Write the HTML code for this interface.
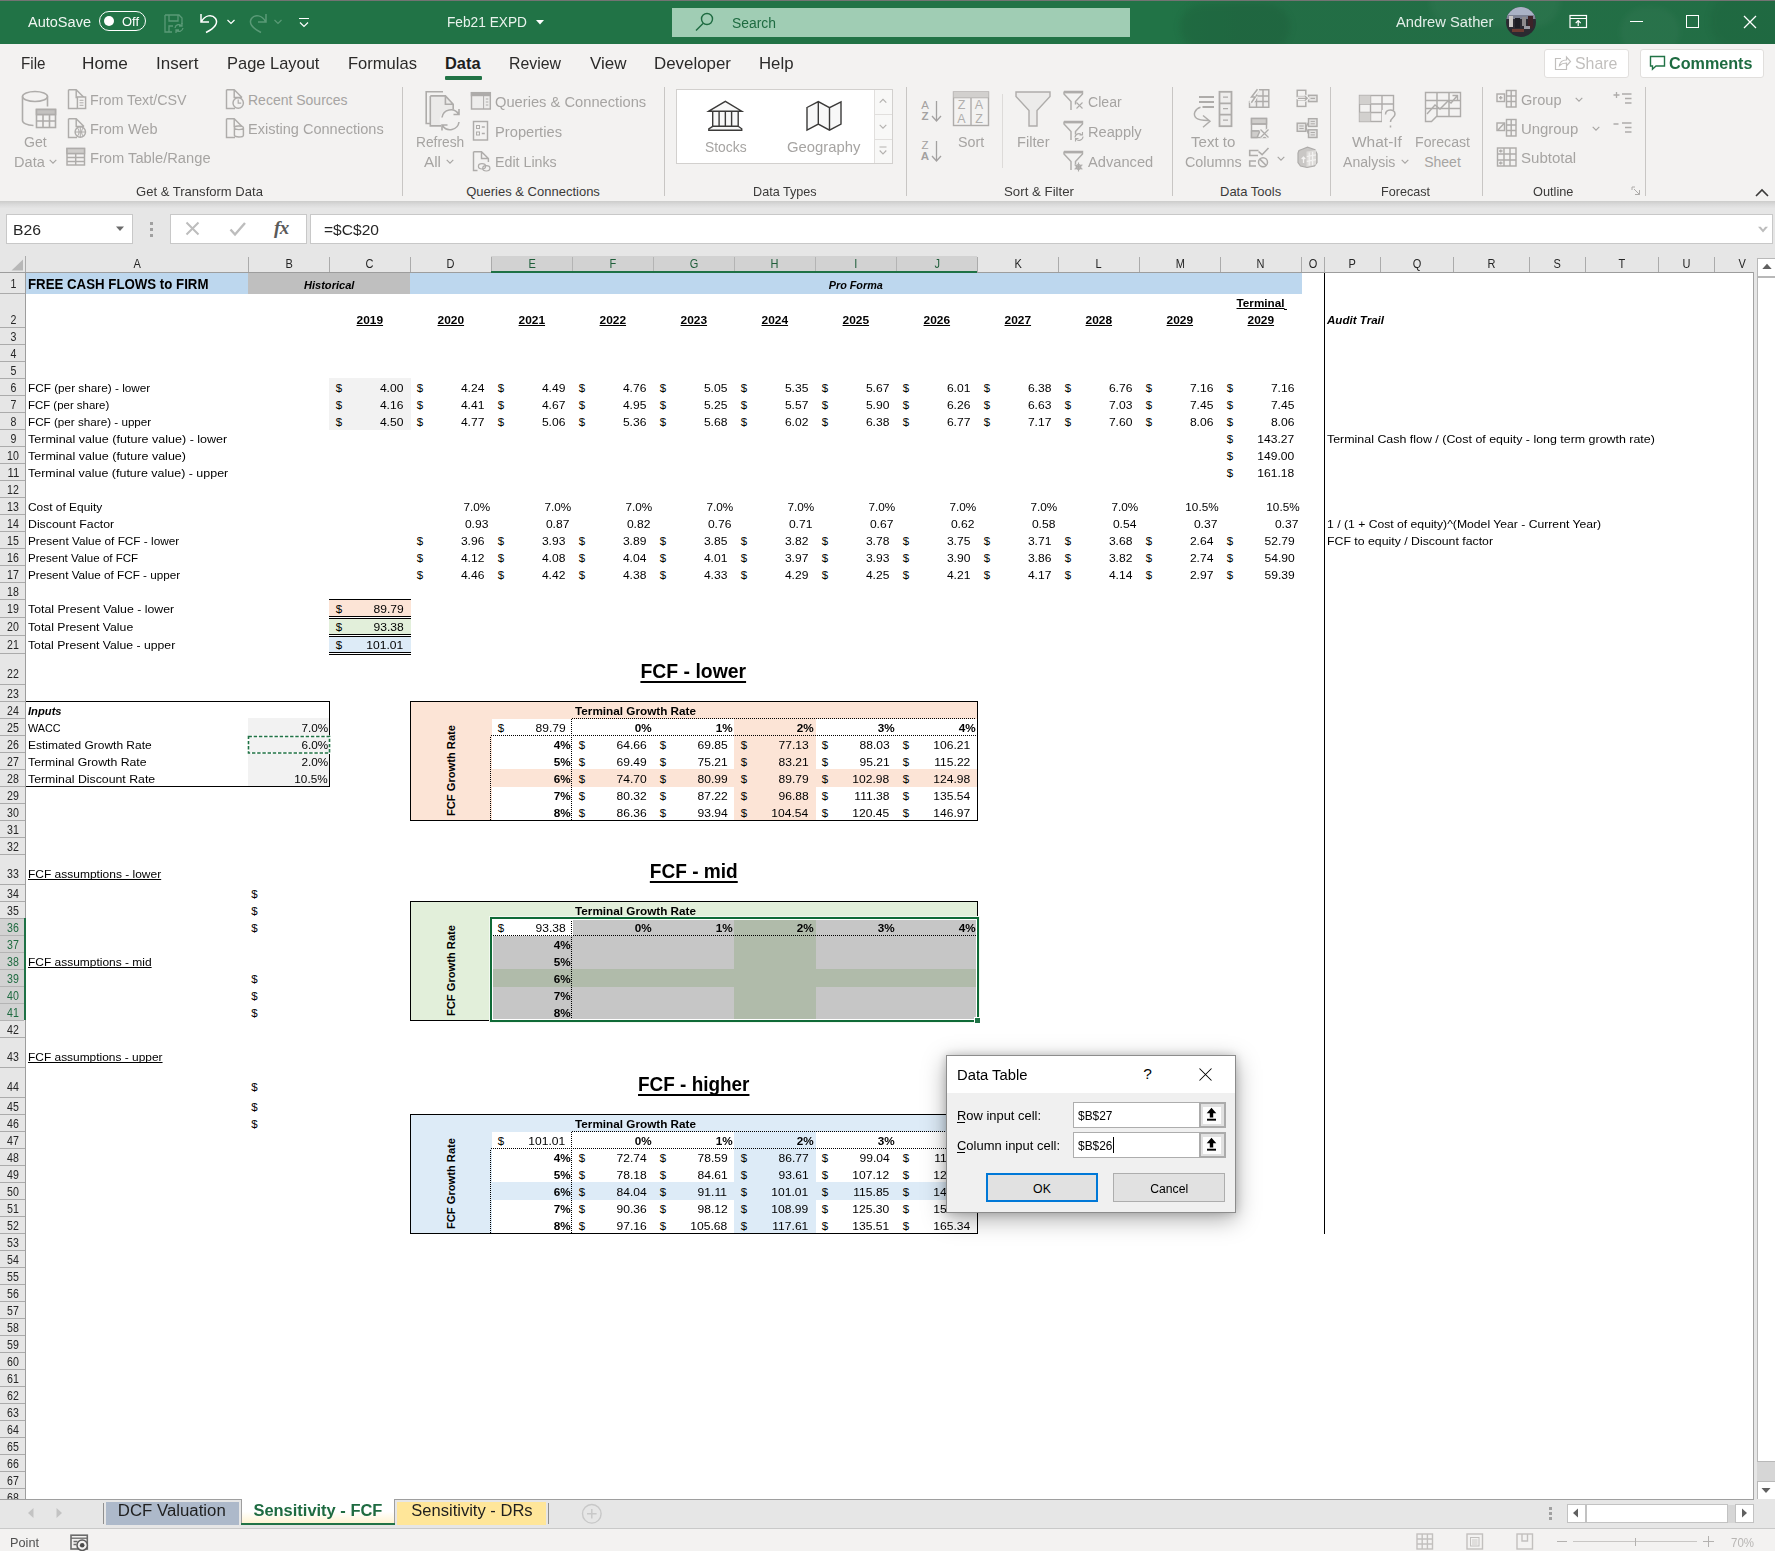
<!DOCTYPE html>
<html lang="en"><head><meta charset="utf-8"><title>Feb21 EXPD - Excel</title>
<style>
html,body{margin:0;padding:0}
body{width:1775px;height:1551px;position:relative;overflow:hidden;background:#fff;font-family:"Liberation Sans",sans-serif}
.a{position:absolute}
.t{position:absolute;white-space:nowrap;text-decoration-skip-ink:none}
.c{position:absolute;white-space:nowrap;font-size:11.500px;line-height:15px;height:15px}
.v{position:absolute;white-space:nowrap;font-weight:bold;font-size:11.500px;line-height:15px;height:15px;width:110px;text-align:center;transform:rotate(-90deg);transform-origin:center center}
svg{overflow:visible}
</style></head>
<body>
<div class="a" style="left:0px;top:0px;width:1775px;height:44px;background:#217346;"></div>
<div class="a" style="left:0px;top:0px;width:1775px;height:1px;background:#737373;"></div>
<div class="a" style="left:1150px;top:1px;width:625px;height:43px;overflow:hidden"><div class="a" style="left:20px;top:0;width:605px;height:43px;background:linear-gradient(90deg,rgba(40,90,66,0),rgba(40,90,66,.22) 12%,rgba(40,90,66,.20) 100%)"></div><div class="a" style="left:30px;top:3px;width:110px;height:46px;border-radius:23px;background:rgba(20,70,45,.18);filter:blur(3px)"></div><div class="a" style="left:280px;top:-24px;width:130px;height:50px;border-radius:25px;background:rgba(255,255,255,.035);filter:blur(3px)"></div><div class="a" style="left:470px;top:6px;width:60px;height:50px;border-radius:25px;background:rgba(255,255,255,.03);filter:blur(3px)"></div><div class="a" style="left:560px;top:-10px;width:90px;height:60px;border-radius:30px;background:rgba(20,70,45,.12);filter:blur(3px)"></div></div>
<div class="t" style="top:12.0px;font-size:15.2px;line-height:20px;height:20px;color:#f0f6f2;left:28.0px;transform:scaleX(0.956);transform-origin:left center;">AutoSave</div>
<div class="a" style="left:99px;top:11px;width:45px;height:18px;border:1.5px solid #fff;border-radius:11px"></div>
<div class="a" style="left:104px;top:16px;width:10px;height:10px;border-radius:5px;background:#fff"></div>
<div class="t" style="top:14.0px;font-size:12.5px;line-height:16px;height:16px;color:#fff;left:122.0px;transform:scaleX(1.034);transform-origin:left center;">Off</div>
<svg class="a" style="left:162px;top:11px;" width="24" height="24" viewBox="0 0 24 24" fill="none"><path d="M3 4h14l3 3v6M3 4v17h7M7 4v6h9V4M7 21v-6h4" stroke="#5a9a77" stroke-width="1.3"/><path d="M13 17a4 4 0 0 1 7-2m1 2a4 4 0 0 1-7 2M20 12v3h-3M14 22v-3h3" stroke="#5a9a77" stroke-width="1.3"/></svg>
<svg class="a" style="left:197px;top:10px;" width="24" height="26" viewBox="0 0 24 26" fill="none"><path d="M4 4v8h8M4.5 11.5C8 5 15 4 18.5 8.5c3 4.5-.5 9.500-9.500 14" stroke="#fff" stroke-width="1.5"/></svg>
<svg class="a" style="left:226px;top:18px;" width="10" height="8" viewBox="0 0 10 8" fill="none"><path d="M1.500 2l3.500 3.500L8.500 2" stroke="#fff" stroke-width="1.2"/></svg>
<svg class="a" style="left:246px;top:10px;" width="24" height="26" viewBox="0 0 24 26" fill="none"><path d="M20 4v8h-8M19.500 11.500C16 5 9 4 5.500 8.500c-3 4.500.500 9.500 9.500 14" stroke="#5a9a77" stroke-width="1.500"/></svg>
<svg class="a" style="left:273px;top:18px;" width="10" height="8" viewBox="0 0 10 8" fill="none"><path d="M1.500 2l3.500 3.500L8.500 2" stroke="#5a9a77" stroke-width="1.2"/></svg>
<svg class="a" style="left:298px;top:16px;" width="12" height="12" viewBox="0 0 12 12" fill="none"><path d="M1 2.500h10M2 6.500l4 4 4-4" stroke="#fff" stroke-width="1.200"/></svg>
<div class="t" style="top:12.0px;font-size:15.2px;line-height:20px;height:20px;color:#eaf3ee;left:447.0px;transform:scaleX(0.902);transform-origin:left center;">Feb21 EXPD</div>
<svg class="a" style="left:535px;top:19px;" width="10" height="7" viewBox="0 0 10 7" fill="none"><path d="M1 1h8L5 5.500z" fill="#fff"/></svg>
<div class="a" style="left:672px;top:8px;width:458px;height:29px;background:#a0cdb4;"></div>
<svg class="a" style="left:694px;top:11px;" width="22" height="22" viewBox="0 0 22 22" fill="none"><circle cx="13" cy="8" r="5.500" stroke="#1e6b41" stroke-width="1.400"/><path d="M9 12.500L2 19.500" stroke="#1e6b41" stroke-width="1.500"/></svg>
<div class="t" style="top:12.5px;font-size:15.2px;line-height:20px;height:20px;color:#1e6b41;left:732.0px;transform:scaleX(0.914);transform-origin:left center;">Search</div>
<div class="t" style="top:12.3px;font-size:15.2px;line-height:20px;height:20px;color:#e3eee8;left:1396.0px;transform:scaleX(0.970);transform-origin:left center;">Andrew Sather</div>
<div class="a" style="left:1506px;top:7px;width:30px;height:30px;border-radius:15px;overflow:hidden;background:#2b2a31"><div class="a" style="left:0;top:0;width:30px;height:10px;background:#aab2c6"></div><div class="a" style="left:0;top:8px;width:30px;height:4px;background:#7d8294"></div><div class="a" style="left:3px;top:9px;width:4px;height:11px;background:#c9c6c4"></div><div class="a" style="left:9px;top:11px;width:5px;height:10px;background:#1d1d24"></div><div class="a" style="left:16px;top:10px;width:4px;height:9px;background:#8d8a8c"></div><div class="a" style="left:22px;top:9px;width:5px;height:12px;background:#3d2328"></div><div class="a" style="left:6px;top:22px;width:12px;height:3px;background:#6d3b32"></div><div class="a" style="left:18px;top:19px;width:6px;height:3px;background:#9a9aa2"></div></div>
<svg class="a" style="left:1569px;top:14px;" width="20" height="16" viewBox="0 0 20 16" fill="none"><rect x="1" y="1.500" width="16.500" height="12" stroke="#fff" stroke-width="1.200"/><path d="M1 4.500h16.500M9.200 12V7M6.700 9.200l2.500-2.500 2.500 2.500" stroke="#fff" stroke-width="1.200"/></svg>
<div class="a" style="left:1630px;top:21px;width:13px;height:1.3px;background:#fff;"></div>
<div class="a" style="left:1686px;top:15px;width:11px;height:11px;border:1.300px solid #fff"></div>
<svg class="a" style="left:1743px;top:15px;" width="14" height="14" viewBox="0 0 14 14" fill="none"><path d="M1 1l12 12M13 1L1 13" stroke="#fff" stroke-width="1.300"/></svg>
<div class="a" style="left:0px;top:44px;width:1775px;height:157px;background:#f3f2f1;"></div>
<div class="t" style="top:52.5px;font-size:16.4px;line-height:21px;height:21px;color:#2b2a29;left:21.0px;transform:scaleX(0.927);transform-origin:left center;">File</div>
<div class="t" style="top:52.5px;font-size:16.4px;line-height:21px;height:21px;color:#2b2a29;left:82.0px;transform:scaleX(1.051);transform-origin:left center;">Home</div>
<div class="t" style="top:52.5px;font-size:16.4px;line-height:21px;height:21px;color:#2b2a29;left:156.0px;transform:scaleX(1.036);transform-origin:left center;">Insert</div>
<div class="t" style="top:52.5px;font-size:16.4px;line-height:21px;height:21px;color:#2b2a29;left:227.0px;transform:scaleX(1.004);transform-origin:left center;">Page Layout</div>
<div class="t" style="top:52.5px;font-size:16.4px;line-height:21px;height:21px;color:#2b2a29;left:348.0px;transform:scaleX(1.010);transform-origin:left center;">Formulas</div>
<div class="t" style="top:52.5px;font-size:16.4px;line-height:21px;height:21px;color:#2b2a29;left:509.0px;transform:scaleX(0.967);transform-origin:left center;">Review</div>
<div class="t" style="top:52.5px;font-size:16.4px;line-height:21px;height:21px;color:#2b2a29;left:590.0px;transform:scaleX(1.035);transform-origin:left center;">View</div>
<div class="t" style="top:52.5px;font-size:16.4px;line-height:21px;height:21px;color:#2b2a29;left:654.0px;transform:scaleX(1.030);transform-origin:left center;">Developer</div>
<div class="t" style="top:52.5px;font-size:16.4px;line-height:21px;height:21px;color:#2b2a29;left:759.0px;transform:scaleX(1.023);transform-origin:left center;">Help</div>
<div class="t" style="top:52.5px;font-size:16.4px;line-height:21px;height:21px;color:#1e1e1e;font-weight:bold;left:445.0px;">Data</div>
<div class="a" style="left:445px;top:76px;width:37px;height:4px;background:#217346;border-radius:1px;"></div>
<div class="a" style="left:1544px;top:49px;width:83px;height:27px;border:1px solid #e1dfdd;border-radius:3px;background:#fff"></div>
<svg class="a" style="left:1553px;top:54px;" width="20" height="18" viewBox="0 0 20 18" fill="none"><path d="M8 4.500H2.500v11h11V12M6.500 11.500c.5-4 3-5.500 7-5.500V3l4 4.500-4 4.500V9c-3 0-5 .5-7 2.500z" stroke="#c1bfbd" stroke-width="1.200"/></svg>
<div class="t" style="top:52.5px;font-size:16.4px;line-height:21px;height:21px;color:#c1bfbd;left:1574.5px;transform:scaleX(0.971);transform-origin:left center;">Share</div>
<div class="a" style="left:1640px;top:49px;width:122px;height:27px;border:1px solid #e1dfdd;border-radius:3px;background:#fff"></div>
<svg class="a" style="left:1649px;top:55px;" width="18" height="17" viewBox="0 0 18 17" fill="none"><path d="M1.500 1.500h14v9.500H7l-3.500 3.200V11h-2z" stroke="#217346" stroke-width="1.400"/></svg>
<div class="t" style="top:52.5px;font-size:16.4px;line-height:21px;height:21px;color:#1e6b41;font-weight:bold;left:1669.0px;transform:scaleX(0.985);transform-origin:left center;">Comments</div>
<svg class="a" style="left:20px;top:90px;" width="38" height="40" viewBox="0 0 38 40" fill="none"><g stroke="#aeacaa" stroke-width="1.6" stroke-linejoin="miter"><ellipse cx="15" cy="6.500" rx="12.500" ry="5"/><path d="M2.500 6.500v24c0 2.600 4.500 4.700 11 5M27.500 6.500v10"/><rect x="16.500" y="19.500" width="19" height="18" fill="#f3f2f1"/><path d="M16.500 24.500h19M16.500 31h19M23 24.500v13M29.500 24.500v13" /><rect x="16.500" y="19.500" width="19" height="5" fill="#c4c2c0"/></g></svg>
<div class="t" style="top:132.7px;font-size:14.0px;line-height:18px;height:18px;color:#a6a4a2;left:24.0px;transform:scaleX(1.006);transform-origin:left center;">Get</div>
<div class="t" style="top:152.7px;font-size:14.0px;line-height:18px;height:18px;color:#a6a4a2;left:13.7px;transform:scaleX(1.041);transform-origin:left center;">Data</div>
<svg class="a" style="left:49px;top:159.0px;" width="8" height="6" viewBox="0 0 8 6" fill="none"><path d="M0.700 0.800l3.300 3.400 3.300-3.400" stroke="#a6a4a2" stroke-width="1.100"/></svg>
<svg class="a" style="left:67px;top:89px;" width="20" height="21" viewBox="0 0 20 21" fill="none"><g stroke="#aeacaa" stroke-width="1.45" stroke-linejoin="miter"><path d="M1.500 0.700H9.200L17 8.500M9.200 0.700V8.500H17M1.500 0.700V19.500H10"/><rect x="10.400" y="8" width="8.200" height="11.500" fill="#f3f2f1"/><path d="M12.500 11.300h4M12.500 13.800h4M12.500 16.300h4" stroke-width="1"/></g></svg>
<div class="t" style="top:90.5px;font-size:14.0px;line-height:18px;height:18px;color:#a6a4a2;left:90.0px;transform:scaleX(1.020);transform-origin:left center;">From Text/CSV</div>
<svg class="a" style="left:67px;top:118px;" width="20" height="21" viewBox="0 0 20 21" fill="none"><g stroke="#aeacaa" stroke-width="1.45" stroke-linejoin="miter"><path d="M1.500 0.700H9.200L17 8.500M9.200 0.700V8.500H17M1.500 0.700V19.500H10"/><circle cx="13.300" cy="14" r="5.200" fill="#f3f2f1"/><path d="M8.100 14h10.400M13.300 8.800v10.400M10.500 10c2 2.500 2 5.500 0 8M16.100 10c-2 2.500-2 5.500 0 8" stroke-width="1"/></g></svg>
<div class="t" style="top:119.5px;font-size:14.0px;line-height:18px;height:18px;color:#a6a4a2;left:90.0px;transform:scaleX(1.037);transform-origin:left center;">From Web</div>
<svg class="a" style="left:66px;top:147px;" width="20" height="20" viewBox="0 0 20 20" fill="none"><g stroke="#aeacaa" stroke-width="1.45" stroke-linejoin="miter"><rect x="1" y="1.500" width="17.500" height="16.500"/><path d="M1 6.500h17.500M1 10.500h17.500M1 14.500h17.500M9.700 6.500v11.500"/><rect x="1" y="1.500" width="17.500" height="5" fill="#cfcdcb"/></g></svg>
<div class="t" style="top:148.5px;font-size:14.0px;line-height:18px;height:18px;color:#a6a4a2;left:90.0px;transform:scaleX(1.049);transform-origin:left center;">From Table/Range</div>
<svg class="a" style="left:225px;top:89px;" width="20" height="21" viewBox="0 0 20 21" fill="none"><g stroke="#aeacaa" stroke-width="1.45" stroke-linejoin="miter"><path d="M1.500 0.700H9.200L17 8.500M9.200 0.700V8.500H17M1.500 0.700V19.500H10"/><circle cx="13.200" cy="14" r="5.200" fill="#f3f2f1"/><path d="M13.200 10.500v3.700h3" stroke-width="1.200"/></g></svg>
<div class="t" style="top:90.5px;font-size:14.0px;line-height:18px;height:18px;color:#a6a4a2;left:248.0px;">Recent Sources</div>
<svg class="a" style="left:225px;top:118px;" width="20" height="21" viewBox="0 0 20 21" fill="none"><g stroke="#aeacaa" stroke-width="1.45" stroke-linejoin="miter"><path d="M1.500 0.700H9.200L17 8.500M9.200 0.700V8.500H17M1.500 0.700V19.500H10"/><path d="M9.400 9.800c0-2.400 9-2.400 9 0v7.400c0 2.400-9 2.400-9 0zM9.400 9.800c0 2.400 9 2.400 9 0" fill="#f3f2f1"/></g></svg>
<div class="t" style="top:119.5px;font-size:14.0px;line-height:18px;height:18px;color:#a6a4a2;left:248.0px;transform:scaleX(1.038);transform-origin:left center;">Existing Connections</div>
<div class="t" style="top:183.0px;font-size:13.0px;line-height:17px;height:17px;color:#3b3a39;left:136.2px;transform:scaleX(1.004);transform-origin:left center;">Get &amp; Transform Data</div>
<div class="a" style="left:402px;top:87px;width:1px;height:109px;background:#c8c6c4;"></div>
<svg class="a" style="left:424px;top:90px;" width="38" height="40" viewBox="0 0 38 40" fill="none"><g stroke="#aeacaa" stroke-width="1.6" stroke-linejoin="miter"><path d="M19 1.700H2.200V33.500H6"/><path d="M6.300 5.900H21.400L29.200 14.300V35.900H6.300z" fill="#ebeae9" stroke="none"/><path d="M6.300 5.900H21.400L29.200 14.300V20M6.300 5.900V35.900H17M21.400 5.900V14.300H29.200"/><circle cx="26.500" cy="29.800" r="10.800" fill="#f3f2f1" stroke="none"/><path d="M18 27.500a9 9 0 0 1 16.500-3.500M35 32a9 9 0 0 1-16.500 3.500M35 19v5.500h-5.500M18 40.500v-5.500h5.500"/></g></svg>
<div class="t" style="top:132.7px;font-size:14.0px;line-height:18px;height:18px;color:#a6a4a2;left:415.5px;transform:scaleX(0.983);transform-origin:left center;">Refresh</div>
<div class="t" style="top:152.5px;font-size:14.0px;line-height:18px;height:18px;color:#a6a4a2;left:424.2px;transform:scaleX(1.093);transform-origin:left center;">All</div>
<svg class="a" style="left:446px;top:159.0px;" width="8" height="6" viewBox="0 0 8 6" fill="none"><path d="M0.700 0.800l3.300 3.400 3.300-3.400" stroke="#a6a4a2" stroke-width="1.100"/></svg>
<svg class="a" style="left:470px;top:91px;" width="22" height="19" viewBox="0 0 22 19" fill="none"><g stroke="#aeacaa" stroke-width="1.45" stroke-linejoin="miter"><rect x="1.500" y="1.700" width="18.800" height="16.300" fill="#eeedec"/><rect x="1.500" y="1.700" width="18.800" height="2.800" fill="#aeacaa"/><path d="M13.600 4.500v13.500M15.800 8h2.500M15.800 11h2.500M15.800 14h2.500" stroke-width="1"/></g></svg>
<div class="t" style="top:92.7px;font-size:14.0px;line-height:18px;height:18px;color:#a6a4a2;left:495.0px;transform:scaleX(1.050);transform-origin:left center;">Queries &amp; Connections</div>
<svg class="a" style="left:472px;top:120px;" width="18" height="22" viewBox="0 0 18 22" fill="none"><g stroke="#aeacaa" stroke-width="1.45" stroke-linejoin="miter"><rect x="1.500" y="1.500" width="14" height="18.500"/><rect x="4.500" y="5.500" width="3" height="3" stroke-width="1"/><rect x="4.500" y="12" width="3" height="3" stroke-width="1"/><path d="M9.800 7h3M9.800 13.500h3"/></g></svg>
<div class="t" style="top:122.7px;font-size:14.0px;line-height:18px;height:18px;color:#a6a4a2;left:495.0px;transform:scaleX(1.050);transform-origin:left center;">Properties</div>
<svg class="a" style="left:472px;top:151px;" width="20" height="22" viewBox="0 0 20 22" fill="none"><g stroke="#aeacaa" stroke-width="1.45" stroke-linejoin="miter"><path d="M1.500 0.700H9.500L16.400 7.500V11M9.500 0.700V7.500H16.400M1.500 0.700V19.500H5.500"/><ellipse cx="10" cy="15.300" rx="3.600" ry="2.700" stroke-width="1.200"/><ellipse cx="14.300" cy="17.300" rx="3.600" ry="2.700" stroke-width="1.200"/></g></svg>
<div class="t" style="top:152.7px;font-size:14.0px;line-height:18px;height:18px;color:#a6a4a2;left:495.0px;transform:scaleX(1.017);transform-origin:left center;">Edit Links</div>
<div class="t" style="top:183.0px;font-size:13.0px;line-height:17px;height:17px;color:#3b3a39;left:466.2px;">Queries &amp; Connections</div>
<div class="a" style="left:664px;top:87px;width:1px;height:109px;background:#c8c6c4;"></div>
<div class="a" style="left:676px;top:89px;width:215px;height:73px;border:1px solid #d2d0ce;background:#fff"></div>
<div class="a" style="left:874px;top:90px;width:1px;height:73px;background:#e1dfdd;"></div>
<div class="a" style="left:874px;top:114px;width:18px;height:1px;background:#e1dfdd;"></div>
<div class="a" style="left:874px;top:139px;width:18px;height:1px;background:#e1dfdd;"></div>
<div class="a" style="left:875px;top:90px;width:17px;height:24px;background:#f8f8f7;"></div>
<div class="a" style="left:875px;top:115px;width:17px;height:24px;background:#f8f8f7;"></div>
<div class="a" style="left:875px;top:140px;width:17px;height:23px;background:#f8f8f7;"></div>
<svg class="a" style="left:879px;top:98px;" width="8" height="6" viewBox="0 0 8 6" fill="none"><path d="M0.700 4.700l3.300-3.400 3.300 3.400" stroke="#b3b1af" stroke-width="1.100"/></svg>
<svg class="a" style="left:879px;top:124px;" width="8" height="6" viewBox="0 0 8 6" fill="none"><path d="M0.700 0.800l3.300 3.400 3.300-3.400" stroke="#b3b1af" stroke-width="1.100"/></svg>
<svg class="a" style="left:879px;top:146px;" width="8" height="10" viewBox="0 0 8 10" fill="none"><path d="M0.500 1h7M0.700 4.500l3.300 3.400 3.300-3.400" stroke="#b3b1af" stroke-width="1.100"/></svg>
<svg class="a" style="left:708px;top:100px;" width="35" height="32" viewBox="0 0 35 32" fill="none"><g stroke="#3b3a39" stroke-width="1.4" stroke-linejoin="miter"><path d="M0.800 11.200L17.350 1.400 33.750 11.200zM4.700 11.200V26.300H30.200V11.200M11.100 11.200V26.300M17.350 11.200V26.300M23.600 11.200V26.300M4.700 26.300L0.800 28.800V30.200H33.750V28.800L30.200 26.300" fill="#f8f8f8"/></g></svg>
<div class="t" style="top:137.7px;font-size:14.2px;line-height:18px;height:18px;color:#a6a4a2;left:705.0px;transform:scaleX(0.979);transform-origin:left center;">Stocks</div>
<svg class="a" style="left:805px;top:100px;" width="38" height="32" viewBox="0 0 38 32" fill="none"><g stroke="#3b3a39" stroke-width="1.4" stroke-linejoin="miter"><path d="M2 7.500L13.300 1.600 24.500 7.700 36 1.800V24.200L24.500 30.200 13.300 24.100 2 30.200zM13.300 1.600V24.100M24.500 7.700V30.200" fill="#f8f8f8"/></g></svg>
<div class="t" style="top:137.7px;font-size:14.2px;line-height:18px;height:18px;color:#a6a4a2;left:787.0px;transform:scaleX(1.046);transform-origin:left center;">Geography</div>
<div class="t" style="top:183.0px;font-size:13.0px;line-height:17px;height:17px;color:#3b3a39;left:753.0px;transform:scaleX(0.972);transform-origin:left center;">Data Types</div>
<div class="a" style="left:906px;top:87px;width:1px;height:109px;background:#c8c6c4;"></div>
<div class="t" style="top:97.5px;font-size:11.5px;line-height:15px;height:15px;color:#a3a1a0;left:901.2px;width:47.7px;text-align:center;">A</div>
<div class="t" style="top:108.5px;font-size:11.5px;line-height:15px;height:15px;color:#a3a1a0;font-weight:bold;left:901.5px;width:47.0px;text-align:center;">Z</div>
<svg class="a" style="left:931px;top:99.5px;" width="11" height="23" viewBox="0 0 11 23" fill="none"><g stroke="#a3a1a0" stroke-width="1.3" stroke-linejoin="miter"><path d="M5.500 1v19.500M1 16l4.500 5 4.500-5"/></g></svg>
<div class="t" style="top:137.5px;font-size:11.5px;line-height:15px;height:15px;color:#a3a1a0;left:901.5px;width:47.0px;text-align:center;">Z</div>
<div class="t" style="top:148.5px;font-size:11.5px;line-height:15px;height:15px;color:#a3a1a0;font-weight:bold;left:900.8px;width:48.3px;text-align:center;">A</div>
<svg class="a" style="left:931px;top:139.5px;" width="11" height="23" viewBox="0 0 11 23" fill="none"><g stroke="#a3a1a0" stroke-width="1.3" stroke-linejoin="miter"><path d="M5.500 1v19.500M1 16l4.500 5 4.500-5"/></g></svg>
<svg class="a" style="left:952px;top:90px;" width="38" height="38" viewBox="0 0 38 38" fill="none"><g stroke="#aeacaa" stroke-width="1.45" stroke-linejoin="miter"><rect x="1.500" y="2" width="35" height="33.500" stroke-width="1.400"/><path d="M1.500 7.500h35M19 7.500v28" stroke-width="1.400"/><rect x="1.500" y="2" width="35" height="5.500" fill="#d2d0ce" stroke="none"/></g></svg>
<div class="t" style="top:97.0px;font-size:12.5px;line-height:16px;height:16px;color:#b0aeac;left:937.7px;width:47.6px;text-align:center;">Z</div>
<div class="t" style="top:110.5px;font-size:12.5px;line-height:16px;height:16px;color:#b0aeac;left:937.3px;width:48.3px;text-align:center;">A</div>
<div class="t" style="top:97.0px;font-size:12.5px;line-height:16px;height:16px;color:#b0aeac;left:954.8px;width:48.3px;text-align:center;">A</div>
<div class="t" style="top:110.5px;font-size:12.5px;line-height:16px;height:16px;color:#b0aeac;left:955.2px;width:47.6px;text-align:center;">Z</div>
<div class="t" style="top:132.7px;font-size:14.0px;line-height:18px;height:18px;color:#a6a4a2;left:957.5px;transform:scaleX(1.020);transform-origin:left center;">Sort</div>
<div class="a" style="left:1002px;top:94px;width:1px;height:74px;background:#dddbd9;"></div>
<svg class="a" style="left:1014px;top:90px;" width="38" height="38" viewBox="0 0 38 38" fill="none"><g stroke="#aeacaa" stroke-width="1.45" stroke-linejoin="miter"><path d="M2 2h34v4.500L23 20.500v15.500h-8V20.500L2 6.500z" fill="#ecebea" stroke-width="1.400"/></g></svg>
<div class="t" style="top:132.7px;font-size:14.0px;line-height:18px;height:18px;color:#a6a4a2;left:1017.0px;transform:scaleX(1.045);transform-origin:left center;">Filter</div>
<svg class="a" style="left:1063px;top:90px;" width="22" height="22" viewBox="0 0 22 22" fill="none"><g stroke="#aeacaa" stroke-width="1.45" stroke-linejoin="miter"><path d="M1 1.500h18.500v2.500l-7 7.500v3M1 1.500v2.500l7 7.500v8.500"/><path d="M1 2.300h18.500" stroke-width="2.200"/><path d="M13.500 12.500l6 6M19.500 12.500l-6 6" stroke-width="1.100"/></g></svg>
<div class="t" style="top:92.7px;font-size:14.0px;line-height:18px;height:18px;color:#a6a4a2;left:1088.0px;transform:scaleX(1.007);transform-origin:left center;">Clear</div>
<svg class="a" style="left:1063px;top:120px;" width="22" height="22" viewBox="0 0 22 22" fill="none"><g stroke="#aeacaa" stroke-width="1.45" stroke-linejoin="miter"><path d="M1 1.500h18.500v2.500l-7 7.500v3M1 1.500v2.500l7 7.500v8.500"/><path d="M1 2.300h18.500" stroke-width="2.200"/><path d="M12 17.500a4 4 0 0 1 7-2.500m1 1.500a4 4 0 0 1-7 2.500M19.500 12v3h-3M12.500 21.500v-3h3" stroke-width="1.100"/></g></svg>
<div class="t" style="top:122.7px;font-size:14.0px;line-height:18px;height:18px;color:#a6a4a2;left:1088.0px;transform:scaleX(1.045);transform-origin:left center;">Reapply</div>
<svg class="a" style="left:1063px;top:150px;" width="22" height="22" viewBox="0 0 22 22" fill="none"><g stroke="#aeacaa" stroke-width="1.45" stroke-linejoin="miter"><path d="M1 1.500h18.500v2.500l-7 7.500v3M1 1.500v2.500l7 7.500v8.500"/><path d="M1 2.300h18.500" stroke-width="2.200"/><circle cx="15.500" cy="17" r="2.200"/><path d="M15.500 12.500v9M11.600 14.700l7.800 4.600M11.600 19.300l7.800-4.600" stroke-width="1.100"/></g></svg>
<div class="t" style="top:152.7px;font-size:14.0px;line-height:18px;height:18px;color:#a6a4a2;left:1088.0px;transform:scaleX(1.047);transform-origin:left center;">Advanced</div>
<div class="t" style="top:183.0px;font-size:13.0px;line-height:17px;height:17px;color:#3b3a39;left:1003.7px;transform:scaleX(1.020);transform-origin:left center;">Sort &amp; Filter</div>
<div class="a" style="left:1172px;top:87px;width:1px;height:109px;background:#c8c6c4;"></div>
<svg class="a" style="left:1192px;top:90px;" width="42" height="38" viewBox="0 0 42 38" fill="none"><g stroke="#aeacaa" stroke-width="1.45" stroke-linejoin="miter"><path d="M7 7h15M7 12h15M10.500 17h11.500" stroke-width="1.900"/><path d="M8.500 17.300c-5 1.500-8.500 7-4 11 2.500 2 8 2.200 13 2.100M11 25.500l7 5.700-7 6"/><rect x="27.500" y="1.800" width="12" height="34.400" stroke-width="1.800" fill="#eeedec"/><path d="M27.500 13.400h12M27.500 24.700h12" stroke-width="1.800"/><path d="M31 7.200h5M31 18.700h5M31 30.200h5" stroke-width="1.300"/></g></svg>
<div class="t" style="top:132.7px;font-size:14.0px;line-height:18px;height:18px;color:#a6a4a2;left:1191.2px;transform:scaleX(1.074);transform-origin:left center;">Text to</div>
<div class="t" style="top:152.7px;font-size:14.0px;line-height:18px;height:18px;color:#a6a4a2;left:1185.0px;transform:scaleX(1.026);transform-origin:left center;">Columns</div>
<svg class="a" style="left:1248px;top:88px;" width="22" height="20" viewBox="0 0 22 20" fill="none"><g stroke="#aeacaa" stroke-width="1.45" stroke-linejoin="miter"><path d="M1.500 19.200H20.800V1.800H11.500L1.500 13.500zM1.500 13.500H20.800M8 8h12.800M8.500 6v13.200M15 1.800v17.400" fill="#eeedec"/><path d="M10 1L2 10.500h4L3 15.500" stroke="#f3f2f1" stroke-width="4.500"/><path d="M9.500 1.200L3.500 9h3.800L3.300 14.800" stroke-width="1.500"/></g></svg>
<svg class="a" style="left:1250px;top:117px;" width="21" height="22" viewBox="0 0 21 22" fill="none"><g stroke="#aeacaa" stroke-width="1.45" stroke-linejoin="miter"><rect x="1.500" y="1.500" width="15" height="19" fill="#f3f2f1"/><rect x="1.500" y="1.500" width="15" height="5.500" fill="#cfcdcb"/><path d="M1.500 7h15M1.500 14h8"/><path d="M1.500 14h8.500l-3 6.500h-5.500z" fill="#cfcdcb"/><path d="M10.500 12.500l8 8M18.500 12.500l-8 8" stroke="#f3f2f1" stroke-width="3.500"/><path d="M10.500 12.500l8 8M18.500 12.500l-8 8" stroke-width="1.300"/></g></svg>
<svg class="a" style="left:1248px;top:146px;" width="23" height="22" viewBox="0 0 23 22" fill="none"><g stroke="#aeacaa" stroke-width="1.45" stroke-linejoin="miter"><path d="M10.500 4.500H1.700V9.500H10M8 15H1.700V20H8" stroke-width="1.600"/><path d="M10.500 5.500l3.600 3.200L20.500 2" stroke-width="1.600"/><circle cx="15" cy="16.300" r="4.500" stroke-width="1.500"/><path d="M11.800 13.100l6.400 6.400" stroke-width="1.500"/></g></svg>
<svg class="a" style="left:1277px;top:155.5px;" width="8" height="6" viewBox="0 0 8 6" fill="none"><path d="M0.700 0.800l3.300 3.400 3.300-3.400" stroke="#a6a4a2" stroke-width="1.100"/></svg>
<svg class="a" style="left:1295px;top:88px;" width="24" height="21" viewBox="0 0 24 21" fill="none"><g stroke="#aeacaa" stroke-width="1.45" stroke-linejoin="miter"><rect x="2.200" y="2.300" width="8.600" height="6.300"/><rect x="2.200" y="11.800" width="8.600" height="6.600"/><rect x="13.500" y="7.300" width="8.500" height="6.300" fill="#e4e3e2"/><path d="M2.500 10.300h10M9.600 7.800l2.700 2.500-2.700 2.500" stroke="#f3f2f1" stroke-width="3.500"/><path d="M3 10.300h9M9.600 7.800l2.700 2.500-2.700 2.500" stroke-width="1.200"/><path d="M15.500 10.400h4.500" stroke-width="1.200"/></g></svg>
<svg class="a" style="left:1295px;top:118px;" width="24" height="21" viewBox="0 0 24 21" fill="none"><g stroke="#aeacaa" stroke-width="1.45" stroke-linejoin="miter"><rect x="2.200" y="5.200" width="8.600" height="8.100" fill="#e4e3e2"/><rect x="13.500" y="0.700" width="8.500" height="7.700" fill="#e4e3e2"/><rect x="13.500" y="11.800" width="8.500" height="7.700" fill="#e4e3e2"/><path d="M10.800 9.200l2.700-4.600M10.800 9.200l2.700 6.400"/><path d="M4.300 8h4.400M4.300 10.500h4.400M15.600 3.400h4.300M15.600 5.800h4.300M15.600 14.500h4.300M15.600 16.900h4.300" stroke-width="1"/></g></svg>
<svg class="a" style="left:1296px;top:146px;" width="23" height="23" viewBox="0 0 23 23" fill="none"><g stroke="#aeacaa" stroke-width="1.45" stroke-linejoin="miter"><path d="M3 4.500L11.500 1.200 19 3.800 21 8V16.500L18.500 20 11 21.500 4.500 20 2 16.500V7z" fill="#c9c7c5" stroke-width="1.200"/><path d="M10.500 5.500l9.500-1.500v14.500l-9.500 2.200z" fill="#dddbd9" stroke="none"/><path d="M13.200 6.500v13M16.600 5.800v13.400M10.800 10.500l9.200-1.600M10.800 15.300l9.200-1.600" stroke="#f3f2f1" stroke-width="1.200"/><path d="M7.500 17v-5.500M5.700 13l1.800-1.800 1.800 1.800" stroke="#f3f2f1" stroke-width="1.300"/></g></svg>
<div class="t" style="top:183.0px;font-size:13.0px;line-height:17px;height:17px;color:#3b3a39;left:1220.0px;">Data Tools</div>
<div class="a" style="left:1330px;top:87px;width:1px;height:109px;background:#c8c6c4;"></div>
<svg class="a" style="left:1358px;top:94px;" width="40" height="36" viewBox="0 0 40 36" fill="none"><g stroke="#aeacaa" stroke-width="1.45" stroke-linejoin="miter"><rect x="1.500" y="1.500" width="34" height="26" stroke-width="1.400"/><path d="M1.500 10h34M1.500 18.500h34M12.500 1.500v26M24 1.500v26" stroke-width="1.400"/><rect x="1.500" y="1.500" width="11" height="8.500" fill="#d2d0ce" stroke="none"/><rect x="1.500" y="18.500" width="11" height="9" fill="#d2d0ce" stroke="none"/><rect x="24" y="16" width="16" height="20" fill="#f3f2f1" stroke="none"/><path d="M27.500 20.500c0-6 9.500-6 9.500-.500 0 4-4.500 3.500-4.500 8M32.500 31.500v2" stroke-width="1.500"/></g></svg>
<div class="t" style="top:132.7px;font-size:14.0px;line-height:18px;height:18px;color:#a6a4a2;left:1352.0px;transform:scaleX(1.106);transform-origin:left center;">What-If</div>
<div class="t" style="top:152.7px;font-size:14.0px;line-height:18px;height:18px;color:#a6a4a2;left:1343.3px;transform:scaleX(1.005);transform-origin:left center;">Analysis</div>
<svg class="a" style="left:1401px;top:159.0px;" width="8" height="6" viewBox="0 0 8 6" fill="none"><path d="M0.700 0.800l3.300 3.400 3.300-3.400" stroke="#a6a4a2" stroke-width="1.100"/></svg>
<svg class="a" style="left:1424px;top:91px;" width="40" height="36" viewBox="0 0 40 36" fill="none"><g stroke="#aeacaa" stroke-width="1.45" stroke-linejoin="miter"><path d="M1.500 1.500h35v24h-24l-5 5h-6z" stroke-width="1.400"/><path d="M1.500 9.500h35M1.500 17.500h35M13 1.500v24M25 1.500v24"/><path d="M3 23l8-9 5 4 8-8 3 2 6-7M28.500 4.500h5v5" stroke-width="1.400"/></g></svg>
<div class="t" style="top:132.7px;font-size:14.0px;line-height:18px;height:18px;color:#a6a4a2;left:1415.2px;transform:scaleX(1.010);transform-origin:left center;">Forecast</div>
<div class="t" style="top:152.7px;font-size:14.0px;line-height:18px;height:18px;color:#a6a4a2;left:1424.2px;">Sheet</div>
<div class="t" style="top:183.0px;font-size:13.0px;line-height:17px;height:17px;color:#3b3a39;left:1381.0px;transform:scaleX(0.969);transform-origin:left center;">Forecast</div>
<div class="a" style="left:1482px;top:87px;width:1px;height:109px;background:#c8c6c4;"></div>
<svg class="a" style="left:1496px;top:89px;" width="22" height="20" viewBox="0 0 22 20" fill="none"><g stroke="#aeacaa" stroke-width="1.45" stroke-linejoin="miter"><rect x="1" y="5" width="7.500" height="7.500"/><path d="M3 8.700h3.500M4.700 7v3.500"/><rect x="10.500" y="1.500" width="9.500" height="16.500"/><path d="M10.500 7h9.500M10.500 12.500h9.500M15.200 1.500v16.500"/></g></svg>
<div class="t" style="top:90.6px;font-size:14.0px;line-height:18px;height:18px;color:#a6a4a2;left:1521.2px;transform:scaleX(1.041);transform-origin:left center;">Group</div>
<svg class="a" style="left:1575.2px;top:97.0px;" width="8" height="6" viewBox="0 0 8 6" fill="none"><path d="M0.700 0.800l3.300 3.400 3.300-3.400" stroke="#a6a4a2" stroke-width="1.100"/></svg>
<svg class="a" style="left:1496px;top:118px;" width="22" height="20" viewBox="0 0 22 20" fill="none"><g stroke="#aeacaa" stroke-width="1.45" stroke-linejoin="miter"><rect x="1" y="5" width="7.500" height="7.500"/><path d="M2 12l6-6.500"/><rect x="10.500" y="1.500" width="9.500" height="16.500"/><path d="M10.500 7h9.500M10.500 12.500h9.500M15.200 1.500v16.500"/></g></svg>
<div class="t" style="top:119.8px;font-size:14.0px;line-height:18px;height:18px;color:#a6a4a2;left:1521.2px;transform:scaleX(1.065);transform-origin:left center;">Ungroup</div>
<svg class="a" style="left:1592px;top:126.0px;" width="8" height="6" viewBox="0 0 8 6" fill="none"><path d="M0.700 0.800l3.300 3.400 3.300-3.400" stroke="#a6a4a2" stroke-width="1.100"/></svg>
<svg class="a" style="left:1496px;top:147px;" width="22" height="20" viewBox="0 0 22 20" fill="none"><g stroke="#aeacaa" stroke-width="1.45" stroke-linejoin="miter"><rect x="1.500" y="1" width="18.500" height="18"/><path d="M1.500 7h18.500M1.500 13h18.500M8 1v18M14 1v18M3 4h3.500M4.700 2.500v3M3 16h3.500M4.700 14.500v3"/></g></svg>
<div class="t" style="top:148.6px;font-size:14.0px;line-height:18px;height:18px;color:#a6a4a2;left:1521.2px;transform:scaleX(1.074);transform-origin:left center;">Subtotal</div>
<svg class="a" style="left:1613px;top:91px;" width="20" height="16" viewBox="0 0 20 16" fill="none"><g stroke="#aeacaa" stroke-width="1.3" stroke-linejoin="miter"><path d="M0.500 4h6M3.500 1v6M9 3h9.500M12 7.500h6.500M12 12h6.500"/></g></svg>
<svg class="a" style="left:1613px;top:120px;" width="20" height="16" viewBox="0 0 20 16" fill="none"><g stroke="#aeacaa" stroke-width="1.3" stroke-linejoin="miter"><path d="M0.500 4h5M9 3h9.500M12 7.500h6.500M12 12h6.500"/></g></svg>
<div class="t" style="top:183.0px;font-size:13.0px;line-height:17px;height:17px;color:#3b3a39;left:1533.2px;transform:scaleX(0.981);transform-origin:left center;">Outline</div>
<svg class="a" style="left:1631px;top:186px;" width="10" height="10" viewBox="0 0 10 10" fill="none"><g stroke="#aeacaa" stroke-width="1" stroke-linejoin="miter"><path d="M1 1h3M1 1v3M3 3l5.500 5.500M8.500 4v4.500H4"/></g></svg>
<div class="a" style="left:1645px;top:87px;width:1px;height:109px;background:#c8c6c4;"></div>
<svg class="a" style="left:1755px;top:189px;" width="14" height="8" viewBox="0 0 14 8" fill="none"><path d="M1 7l6-6 6 6" stroke="#3b3a39" stroke-width="1.600"/></svg>
<div class="a" style="left:0;top:201px;width:1775px;height:9px;background:linear-gradient(#cccccb,#dadada 38%,#e3e3e3 70%,#e6e6e6)"></div>
<div class="a" style="left:0px;top:208px;width:1775px;height:48px;background:#e6e6e6;"></div>
<div class="a" style="left:6px;top:214px;width:125px;height:28px;border:1px solid #c8c8c8;background:#fff"></div>
<div class="t" style="top:219.5px;font-size:15.0px;line-height:20px;height:20px;color:#262626;left:13.0px;transform:scaleX(1.049);transform-origin:left center;">B26</div>
<svg class="a" style="left:115px;top:226px;" width="10" height="6" viewBox="0 0 10 6" fill="none"><path d="M1 0.500h8L5 5z" fill="#6a6a6a"/></svg>
<div class="a" style="left:150px;top:222px;width:3px;height:3px;background:#a0a0a0;"></div>
<div class="a" style="left:150px;top:228px;width:3px;height:3px;background:#a0a0a0;"></div>
<div class="a" style="left:150px;top:234px;width:3px;height:3px;background:#a0a0a0;"></div>
<div class="a" style="left:170px;top:214px;width:135px;height:28px;border:1px solid #c8c8c8;background:#fff"></div>
<svg class="a" style="left:185px;top:221px;" width="16" height="16" viewBox="0 0 16 16" fill="none"><path d="M1.500 1.500l12 12M13.500 1.500l-12 12" stroke="#bdbdbd" stroke-width="2"/></svg>
<svg class="a" style="left:229px;top:221px;" width="18" height="16" viewBox="0 0 18 16" fill="none"><path d="M1.500 8.500l4.500 5L16 2" stroke="#bdbdbd" stroke-width="2.400"/></svg>
<div class="t" style="left:274px;top:217px;font-family:'Liberation Serif',serif;font-style:italic;font-weight:bold;font-size:19px;line-height:22px;color:#5a5a5a;letter-spacing:-0.500px">fx</div>
<div class="a" style="left:310px;top:214px;width:1461px;height:28px;border:1px solid #c8c8c8;background:#fff"></div>
<div class="t" style="top:219.5px;font-size:15.0px;line-height:20px;height:20px;color:#262626;left:324.0px;transform:scaleX(1.038);transform-origin:left center;">=$C$20</div>
<svg class="a" style="left:1757.5px;top:225.5px;" width="10" height="7" viewBox="0 0 10 7" fill="none"><path d="M0 0.700h2.800L5 3.500 7.200 0.700H10L5 6.500z" fill="#bcbcbc"/></svg>
<div class="a" style="left:0px;top:256px;width:1775px;height:1243px;background:#fff;"></div>
<div class="a" style="left:0px;top:256px;width:1754px;height:17px;background:#e6e6e6;"></div>
<div class="t" style="top:255.0px;font-size:12.8px;line-height:17px;height:17px;color:#262626;left:113.2px;width:48.5px;text-align:center;transform:scaleX(0.860);transform-origin:center center;">A</div>
<div class="t" style="top:255.0px;font-size:12.8px;line-height:17px;height:17px;color:#262626;left:264.7px;width:48.5px;text-align:center;transform:scaleX(0.860);transform-origin:center center;">B</div>
<div class="t" style="top:255.0px;font-size:12.8px;line-height:17px;height:17px;color:#262626;left:345.4px;width:49.2px;text-align:center;transform:scaleX(0.860);transform-origin:center center;">C</div>
<div class="t" style="top:255.0px;font-size:12.8px;line-height:17px;height:17px;color:#262626;left:426.4px;width:49.2px;text-align:center;transform:scaleX(0.860);transform-origin:center center;">D</div>
<div class="a" style="left:491px;top:256px;width:81px;height:16px;background:#d2d2d2;"></div>
<div class="a" style="left:491px;top:271px;width:81px;height:2px;background:#217346;"></div>
<div class="t" style="top:255.0px;font-size:12.8px;line-height:17px;height:17px;color:#1f5e3a;left:507.7px;width:48.5px;text-align:center;transform:scaleX(0.860);transform-origin:center center;">E</div>
<div class="a" style="left:572px;top:256px;width:81px;height:16px;background:#d2d2d2;"></div>
<div class="a" style="left:572px;top:271px;width:81px;height:2px;background:#217346;"></div>
<div class="t" style="top:255.0px;font-size:12.8px;line-height:17px;height:17px;color:#1f5e3a;left:589.1px;width:47.8px;text-align:center;transform:scaleX(0.860);transform-origin:center center;">F</div>
<div class="a" style="left:653px;top:256px;width:81px;height:16px;background:#d2d2d2;"></div>
<div class="a" style="left:653px;top:271px;width:81px;height:2px;background:#217346;"></div>
<div class="t" style="top:255.0px;font-size:12.8px;line-height:17px;height:17px;color:#1f5e3a;left:669.0px;width:50.0px;text-align:center;transform:scaleX(0.860);transform-origin:center center;">G</div>
<div class="a" style="left:734px;top:256px;width:81px;height:16px;background:#d2d2d2;"></div>
<div class="a" style="left:734px;top:271px;width:81px;height:2px;background:#217346;"></div>
<div class="t" style="top:255.0px;font-size:12.8px;line-height:17px;height:17px;color:#1f5e3a;left:750.4px;width:49.2px;text-align:center;transform:scaleX(0.860);transform-origin:center center;">H</div>
<div class="a" style="left:815px;top:256px;width:81px;height:16px;background:#d2d2d2;"></div>
<div class="a" style="left:815px;top:271px;width:81px;height:2px;background:#217346;"></div>
<div class="t" style="top:255.0px;font-size:12.8px;line-height:17px;height:17px;color:#1f5e3a;left:834.2px;width:43.6px;text-align:center;transform:scaleX(0.860);transform-origin:center center;">I</div>
<div class="a" style="left:896px;top:256px;width:81px;height:16px;background:#d2d2d2;"></div>
<div class="a" style="left:896px;top:271px;width:81px;height:2px;background:#217346;"></div>
<div class="t" style="top:255.0px;font-size:12.8px;line-height:17px;height:17px;color:#1f5e3a;left:913.8px;width:46.4px;text-align:center;transform:scaleX(0.860);transform-origin:center center;">J</div>
<div class="t" style="top:255.0px;font-size:12.8px;line-height:17px;height:17px;color:#262626;left:993.7px;width:48.5px;text-align:center;transform:scaleX(0.860);transform-origin:center center;">K</div>
<div class="t" style="top:255.0px;font-size:12.8px;line-height:17px;height:17px;color:#262626;left:1075.4px;width:47.1px;text-align:center;transform:scaleX(0.860);transform-origin:center center;">L</div>
<div class="t" style="top:255.0px;font-size:12.8px;line-height:17px;height:17px;color:#262626;left:1154.7px;width:50.7px;text-align:center;transform:scaleX(0.860);transform-origin:center center;">M</div>
<div class="t" style="top:255.0px;font-size:12.8px;line-height:17px;height:17px;color:#262626;left:1236.4px;width:49.2px;text-align:center;transform:scaleX(0.860);transform-origin:center center;">N</div>
<div class="t" style="top:255.0px;font-size:12.8px;line-height:17px;height:17px;color:#262626;left:1288.0px;width:50.0px;text-align:center;transform:scaleX(0.860);transform-origin:center center;">O</div>
<div class="t" style="top:255.0px;font-size:12.8px;line-height:17px;height:17px;color:#262626;left:1328.2px;width:48.5px;text-align:center;transform:scaleX(0.860);transform-origin:center center;">P</div>
<div class="t" style="top:255.0px;font-size:12.8px;line-height:17px;height:17px;color:#262626;left:1392.0px;width:50.0px;text-align:center;transform:scaleX(0.860);transform-origin:center center;">Q</div>
<div class="t" style="top:255.0px;font-size:12.8px;line-height:17px;height:17px;color:#262626;left:1466.9px;width:49.2px;text-align:center;transform:scaleX(0.860);transform-origin:center center;">R</div>
<div class="t" style="top:255.0px;font-size:12.8px;line-height:17px;height:17px;color:#262626;left:1533.2px;width:48.5px;text-align:center;transform:scaleX(0.860);transform-origin:center center;">S</div>
<div class="t" style="top:255.0px;font-size:12.8px;line-height:17px;height:17px;color:#262626;left:1598.1px;width:47.8px;text-align:center;transform:scaleX(0.860);transform-origin:center center;">T</div>
<div class="t" style="top:255.0px;font-size:12.8px;line-height:17px;height:17px;color:#262626;left:1661.9px;width:49.2px;text-align:center;transform:scaleX(0.860);transform-origin:center center;">U</div>
<div class="t" style="top:255.0px;font-size:12.8px;line-height:17px;height:17px;color:#262626;left:1718.1px;width:48.5px;text-align:center;transform:scaleX(0.860);transform-origin:center center;">V</div>
<div class="a" style="left:248px;top:257px;width:1px;height:15px;background:#ababab;"></div>
<div class="a" style="left:329px;top:257px;width:1px;height:15px;background:#ababab;"></div>
<div class="a" style="left:410px;top:257px;width:1px;height:15px;background:#ababab;"></div>
<div class="a" style="left:491px;top:257px;width:1px;height:15px;background:#ababab;"></div>
<div class="a" style="left:572px;top:257px;width:1px;height:14px;background:#b4b4b4;"></div>
<div class="a" style="left:653px;top:257px;width:1px;height:14px;background:#b4b4b4;"></div>
<div class="a" style="left:734px;top:257px;width:1px;height:14px;background:#b4b4b4;"></div>
<div class="a" style="left:815px;top:257px;width:1px;height:14px;background:#b4b4b4;"></div>
<div class="a" style="left:896px;top:257px;width:1px;height:14px;background:#b4b4b4;"></div>
<div class="a" style="left:977px;top:257px;width:1px;height:15px;background:#ababab;"></div>
<div class="a" style="left:1058px;top:257px;width:1px;height:15px;background:#ababab;"></div>
<div class="a" style="left:1139px;top:257px;width:1px;height:15px;background:#ababab;"></div>
<div class="a" style="left:1220px;top:257px;width:1px;height:15px;background:#ababab;"></div>
<div class="a" style="left:1301px;top:257px;width:1px;height:15px;background:#ababab;"></div>
<div class="a" style="left:1324px;top:257px;width:1px;height:15px;background:#ababab;"></div>
<div class="a" style="left:1380px;top:257px;width:1px;height:15px;background:#ababab;"></div>
<div class="a" style="left:1453px;top:257px;width:1px;height:15px;background:#ababab;"></div>
<div class="a" style="left:1529px;top:257px;width:1px;height:15px;background:#ababab;"></div>
<div class="a" style="left:1585px;top:257px;width:1px;height:15px;background:#ababab;"></div>
<div class="a" style="left:1658px;top:257px;width:1px;height:15px;background:#ababab;"></div>
<div class="a" style="left:1714px;top:257px;width:1px;height:15px;background:#ababab;"></div>
<div class="a" style="left:0px;top:272px;width:491px;height:1px;background:#9d9d9d;"></div>
<div class="a" style="left:977px;top:272px;width:777px;height:1px;background:#9d9d9d;"></div>
<svg class="a" style="left:10px;top:259px;" width="14" height="12" viewBox="0 0 14 12" fill="none"><path d="M13 0.500v11H1.500z" fill="#b7b7b7"/></svg>
<div class="a" style="left:25px;top:256px;width:1px;height:17px;background:#ababab;"></div>
<div class="a" style="left:0px;top:273px;width:26px;height:1226px;background:#e6e6e6;"></div>
<div class="a" style="left:25px;top:273px;width:1px;height:1226px;background:#9d9d9d;"></div>
<div class="a" style="left:0px;top:293px;width:25px;height:1px;background:#ababab;"></div>
<div class="t" style="top:276.2px;font-size:12.5px;line-height:16px;height:16px;color:#262626;left:-10.4px;width:47.0px;text-align:center;transform:scaleX(0.849);transform-origin:center center;">1</div>
<div class="a" style="left:0px;top:327px;width:25px;height:1px;background:#ababab;"></div>
<div class="t" style="top:311.5px;font-size:12.5px;line-height:16px;height:16px;color:#262626;left:-10.4px;width:47.0px;text-align:center;transform:scaleX(0.849);transform-origin:center center;">2</div>
<div class="a" style="left:0px;top:344px;width:25px;height:1px;background:#ababab;"></div>
<div class="t" style="top:328.5px;font-size:12.5px;line-height:16px;height:16px;color:#262626;left:-10.4px;width:47.0px;text-align:center;transform:scaleX(0.849);transform-origin:center center;">3</div>
<div class="a" style="left:0px;top:361px;width:25px;height:1px;background:#ababab;"></div>
<div class="t" style="top:345.5px;font-size:12.5px;line-height:16px;height:16px;color:#262626;left:-10.4px;width:47.0px;text-align:center;transform:scaleX(0.849);transform-origin:center center;">4</div>
<div class="a" style="left:0px;top:378px;width:25px;height:1px;background:#ababab;"></div>
<div class="t" style="top:362.5px;font-size:12.5px;line-height:16px;height:16px;color:#262626;left:-10.4px;width:47.0px;text-align:center;transform:scaleX(0.849);transform-origin:center center;">5</div>
<div class="a" style="left:0px;top:395px;width:25px;height:1px;background:#ababab;"></div>
<div class="t" style="top:379.5px;font-size:12.5px;line-height:16px;height:16px;color:#262626;left:-10.4px;width:47.0px;text-align:center;transform:scaleX(0.849);transform-origin:center center;">6</div>
<div class="a" style="left:0px;top:412px;width:25px;height:1px;background:#ababab;"></div>
<div class="t" style="top:396.5px;font-size:12.5px;line-height:16px;height:16px;color:#262626;left:-10.4px;width:47.0px;text-align:center;transform:scaleX(0.849);transform-origin:center center;">7</div>
<div class="a" style="left:0px;top:429px;width:25px;height:1px;background:#ababab;"></div>
<div class="t" style="top:413.5px;font-size:12.5px;line-height:16px;height:16px;color:#262626;left:-10.4px;width:47.0px;text-align:center;transform:scaleX(0.849);transform-origin:center center;">8</div>
<div class="a" style="left:0px;top:446px;width:25px;height:1px;background:#ababab;"></div>
<div class="t" style="top:430.5px;font-size:12.5px;line-height:16px;height:16px;color:#262626;left:-10.4px;width:47.0px;text-align:center;transform:scaleX(0.849);transform-origin:center center;">9</div>
<div class="a" style="left:0px;top:463px;width:25px;height:1px;background:#ababab;"></div>
<div class="t" style="top:447.5px;font-size:12.5px;line-height:16px;height:16px;color:#262626;left:-13.9px;width:53.9px;text-align:center;transform:scaleX(0.849);transform-origin:center center;">10</div>
<div class="a" style="left:0px;top:480px;width:25px;height:1px;background:#ababab;"></div>
<div class="t" style="top:464.5px;font-size:12.5px;line-height:16px;height:16px;color:#262626;left:-13.4px;width:53.0px;text-align:center;transform:scaleX(0.909);transform-origin:center center;">11</div>
<div class="a" style="left:0px;top:497px;width:25px;height:1px;background:#ababab;"></div>
<div class="t" style="top:481.5px;font-size:12.5px;line-height:16px;height:16px;color:#262626;left:-13.9px;width:53.9px;text-align:center;transform:scaleX(0.849);transform-origin:center center;">12</div>
<div class="a" style="left:0px;top:514px;width:25px;height:1px;background:#ababab;"></div>
<div class="t" style="top:498.5px;font-size:12.5px;line-height:16px;height:16px;color:#262626;left:-13.9px;width:53.9px;text-align:center;transform:scaleX(0.849);transform-origin:center center;">13</div>
<div class="a" style="left:0px;top:531px;width:25px;height:1px;background:#ababab;"></div>
<div class="t" style="top:515.5px;font-size:12.5px;line-height:16px;height:16px;color:#262626;left:-13.9px;width:53.9px;text-align:center;transform:scaleX(0.849);transform-origin:center center;">14</div>
<div class="a" style="left:0px;top:548px;width:25px;height:1px;background:#ababab;"></div>
<div class="t" style="top:532.5px;font-size:12.5px;line-height:16px;height:16px;color:#262626;left:-13.9px;width:53.9px;text-align:center;transform:scaleX(0.849);transform-origin:center center;">15</div>
<div class="a" style="left:0px;top:565px;width:25px;height:1px;background:#ababab;"></div>
<div class="t" style="top:549.5px;font-size:12.5px;line-height:16px;height:16px;color:#262626;left:-13.9px;width:53.9px;text-align:center;transform:scaleX(0.849);transform-origin:center center;">16</div>
<div class="a" style="left:0px;top:582px;width:25px;height:1px;background:#ababab;"></div>
<div class="t" style="top:566.5px;font-size:12.5px;line-height:16px;height:16px;color:#262626;left:-13.9px;width:53.9px;text-align:center;transform:scaleX(0.849);transform-origin:center center;">17</div>
<div class="a" style="left:0px;top:599px;width:25px;height:1px;background:#ababab;"></div>
<div class="t" style="top:583.5px;font-size:12.5px;line-height:16px;height:16px;color:#262626;left:-13.9px;width:53.9px;text-align:center;transform:scaleX(0.849);transform-origin:center center;">18</div>
<div class="a" style="left:0px;top:617px;width:25px;height:1px;background:#ababab;"></div>
<div class="t" style="top:600.9px;font-size:12.5px;line-height:16px;height:16px;color:#262626;left:-13.9px;width:53.9px;text-align:center;transform:scaleX(0.849);transform-origin:center center;">19</div>
<div class="a" style="left:0px;top:635px;width:25px;height:1px;background:#ababab;"></div>
<div class="t" style="top:618.9px;font-size:12.5px;line-height:16px;height:16px;color:#262626;left:-13.9px;width:53.9px;text-align:center;transform:scaleX(0.849);transform-origin:center center;">20</div>
<div class="a" style="left:0px;top:653px;width:25px;height:1px;background:#ababab;"></div>
<div class="t" style="top:636.9px;font-size:12.5px;line-height:16px;height:16px;color:#262626;left:-13.9px;width:53.9px;text-align:center;transform:scaleX(0.849);transform-origin:center center;">21</div>
<div class="a" style="left:0px;top:684px;width:25px;height:1px;background:#ababab;"></div>
<div class="t" style="top:665.5px;font-size:12.5px;line-height:16px;height:16px;color:#262626;left:-13.9px;width:53.9px;text-align:center;transform:scaleX(0.849);transform-origin:center center;">22</div>
<div class="a" style="left:0px;top:701px;width:25px;height:1px;background:#ababab;"></div>
<div class="t" style="top:685.5px;font-size:12.5px;line-height:16px;height:16px;color:#262626;left:-13.9px;width:53.9px;text-align:center;transform:scaleX(0.849);transform-origin:center center;">23</div>
<div class="a" style="left:0px;top:718px;width:25px;height:1px;background:#ababab;"></div>
<div class="t" style="top:702.5px;font-size:12.5px;line-height:16px;height:16px;color:#262626;left:-13.9px;width:53.9px;text-align:center;transform:scaleX(0.849);transform-origin:center center;">24</div>
<div class="a" style="left:0px;top:735px;width:25px;height:1px;background:#ababab;"></div>
<div class="t" style="top:719.5px;font-size:12.5px;line-height:16px;height:16px;color:#262626;left:-13.9px;width:53.9px;text-align:center;transform:scaleX(0.849);transform-origin:center center;">25</div>
<div class="a" style="left:0px;top:752px;width:25px;height:1px;background:#ababab;"></div>
<div class="t" style="top:736.5px;font-size:12.5px;line-height:16px;height:16px;color:#262626;left:-13.9px;width:53.9px;text-align:center;transform:scaleX(0.849);transform-origin:center center;">26</div>
<div class="a" style="left:0px;top:769px;width:25px;height:1px;background:#ababab;"></div>
<div class="t" style="top:753.5px;font-size:12.5px;line-height:16px;height:16px;color:#262626;left:-13.9px;width:53.9px;text-align:center;transform:scaleX(0.849);transform-origin:center center;">27</div>
<div class="a" style="left:0px;top:786px;width:25px;height:1px;background:#ababab;"></div>
<div class="t" style="top:770.5px;font-size:12.5px;line-height:16px;height:16px;color:#262626;left:-13.9px;width:53.9px;text-align:center;transform:scaleX(0.849);transform-origin:center center;">28</div>
<div class="a" style="left:0px;top:803px;width:25px;height:1px;background:#ababab;"></div>
<div class="t" style="top:787.5px;font-size:12.5px;line-height:16px;height:16px;color:#262626;left:-13.9px;width:53.9px;text-align:center;transform:scaleX(0.849);transform-origin:center center;">29</div>
<div class="a" style="left:0px;top:820px;width:25px;height:1px;background:#ababab;"></div>
<div class="t" style="top:804.5px;font-size:12.5px;line-height:16px;height:16px;color:#262626;left:-13.9px;width:53.9px;text-align:center;transform:scaleX(0.849);transform-origin:center center;">30</div>
<div class="a" style="left:0px;top:837px;width:25px;height:1px;background:#ababab;"></div>
<div class="t" style="top:821.5px;font-size:12.5px;line-height:16px;height:16px;color:#262626;left:-13.9px;width:53.9px;text-align:center;transform:scaleX(0.849);transform-origin:center center;">31</div>
<div class="a" style="left:0px;top:854px;width:25px;height:1px;background:#ababab;"></div>
<div class="t" style="top:838.5px;font-size:12.5px;line-height:16px;height:16px;color:#262626;left:-13.9px;width:53.9px;text-align:center;transform:scaleX(0.849);transform-origin:center center;">32</div>
<div class="a" style="left:0px;top:884px;width:25px;height:1px;background:#ababab;"></div>
<div class="t" style="top:865.5px;font-size:12.5px;line-height:16px;height:16px;color:#262626;left:-13.9px;width:53.9px;text-align:center;transform:scaleX(0.849);transform-origin:center center;">33</div>
<div class="a" style="left:0px;top:901px;width:25px;height:1px;background:#ababab;"></div>
<div class="t" style="top:885.5px;font-size:12.5px;line-height:16px;height:16px;color:#262626;left:-13.9px;width:53.9px;text-align:center;transform:scaleX(0.849);transform-origin:center center;">34</div>
<div class="a" style="left:0px;top:918px;width:25px;height:1px;background:#ababab;"></div>
<div class="t" style="top:902.5px;font-size:12.5px;line-height:16px;height:16px;color:#262626;left:-13.9px;width:53.9px;text-align:center;transform:scaleX(0.849);transform-origin:center center;">35</div>
<div class="a" style="left:0px;top:919px;width:24px;height:17px;background:#d2d2d2;"></div>
<div class="a" style="left:24px;top:918px;width:2px;height:17px;background:#1e7145;"></div>
<div class="a" style="left:0px;top:935px;width:24px;height:1px;background:#b4b4b4;"></div>
<div class="t" style="top:919.5px;font-size:12.5px;line-height:16px;height:16px;color:#1f6b41;left:-13.9px;width:53.9px;text-align:center;transform:scaleX(0.849);transform-origin:center center;">36</div>
<div class="a" style="left:0px;top:936px;width:24px;height:17px;background:#d2d2d2;"></div>
<div class="a" style="left:24px;top:935px;width:2px;height:17px;background:#1e7145;"></div>
<div class="a" style="left:0px;top:952px;width:24px;height:1px;background:#b4b4b4;"></div>
<div class="t" style="top:936.5px;font-size:12.5px;line-height:16px;height:16px;color:#1f6b41;left:-13.9px;width:53.9px;text-align:center;transform:scaleX(0.849);transform-origin:center center;">37</div>
<div class="a" style="left:0px;top:953px;width:24px;height:17px;background:#d2d2d2;"></div>
<div class="a" style="left:24px;top:952px;width:2px;height:17px;background:#1e7145;"></div>
<div class="a" style="left:0px;top:969px;width:24px;height:1px;background:#b4b4b4;"></div>
<div class="t" style="top:953.5px;font-size:12.5px;line-height:16px;height:16px;color:#1f6b41;left:-13.9px;width:53.9px;text-align:center;transform:scaleX(0.849);transform-origin:center center;">38</div>
<div class="a" style="left:0px;top:970px;width:24px;height:17px;background:#d2d2d2;"></div>
<div class="a" style="left:24px;top:969px;width:2px;height:17px;background:#1e7145;"></div>
<div class="a" style="left:0px;top:986px;width:24px;height:1px;background:#b4b4b4;"></div>
<div class="t" style="top:970.5px;font-size:12.5px;line-height:16px;height:16px;color:#1f6b41;left:-13.9px;width:53.9px;text-align:center;transform:scaleX(0.849);transform-origin:center center;">39</div>
<div class="a" style="left:0px;top:987px;width:24px;height:17px;background:#d2d2d2;"></div>
<div class="a" style="left:24px;top:986px;width:2px;height:17px;background:#1e7145;"></div>
<div class="a" style="left:0px;top:1003px;width:24px;height:1px;background:#b4b4b4;"></div>
<div class="t" style="top:987.5px;font-size:12.5px;line-height:16px;height:16px;color:#1f6b41;left:-13.9px;width:53.9px;text-align:center;transform:scaleX(0.849);transform-origin:center center;">40</div>
<div class="a" style="left:0px;top:1004px;width:24px;height:17px;background:#d2d2d2;"></div>
<div class="a" style="left:24px;top:1003px;width:2px;height:17px;background:#1e7145;"></div>
<div class="a" style="left:0px;top:1020px;width:24px;height:1px;background:#b4b4b4;"></div>
<div class="t" style="top:1004.5px;font-size:12.5px;line-height:16px;height:16px;color:#1f6b41;left:-13.9px;width:53.9px;text-align:center;transform:scaleX(0.849);transform-origin:center center;">41</div>
<div class="a" style="left:0px;top:1037px;width:25px;height:1px;background:#ababab;"></div>
<div class="t" style="top:1021.5px;font-size:12.5px;line-height:16px;height:16px;color:#262626;left:-13.9px;width:53.9px;text-align:center;transform:scaleX(0.849);transform-origin:center center;">42</div>
<div class="a" style="left:0px;top:1067px;width:25px;height:1px;background:#ababab;"></div>
<div class="t" style="top:1048.5px;font-size:12.5px;line-height:16px;height:16px;color:#262626;left:-13.9px;width:53.9px;text-align:center;transform:scaleX(0.849);transform-origin:center center;">43</div>
<div class="a" style="left:0px;top:1097px;width:25px;height:1px;background:#ababab;"></div>
<div class="t" style="top:1078.5px;font-size:12.5px;line-height:16px;height:16px;color:#262626;left:-13.9px;width:53.9px;text-align:center;transform:scaleX(0.849);transform-origin:center center;">44</div>
<div class="a" style="left:0px;top:1114px;width:25px;height:1px;background:#ababab;"></div>
<div class="t" style="top:1098.5px;font-size:12.5px;line-height:16px;height:16px;color:#262626;left:-13.9px;width:53.9px;text-align:center;transform:scaleX(0.849);transform-origin:center center;">45</div>
<div class="a" style="left:0px;top:1131px;width:25px;height:1px;background:#ababab;"></div>
<div class="t" style="top:1115.5px;font-size:12.5px;line-height:16px;height:16px;color:#262626;left:-13.9px;width:53.9px;text-align:center;transform:scaleX(0.849);transform-origin:center center;">46</div>
<div class="a" style="left:0px;top:1148px;width:25px;height:1px;background:#ababab;"></div>
<div class="t" style="top:1132.5px;font-size:12.5px;line-height:16px;height:16px;color:#262626;left:-13.9px;width:53.9px;text-align:center;transform:scaleX(0.849);transform-origin:center center;">47</div>
<div class="a" style="left:0px;top:1165px;width:25px;height:1px;background:#ababab;"></div>
<div class="t" style="top:1149.5px;font-size:12.5px;line-height:16px;height:16px;color:#262626;left:-13.9px;width:53.9px;text-align:center;transform:scaleX(0.849);transform-origin:center center;">48</div>
<div class="a" style="left:0px;top:1182px;width:25px;height:1px;background:#ababab;"></div>
<div class="t" style="top:1166.5px;font-size:12.5px;line-height:16px;height:16px;color:#262626;left:-13.9px;width:53.9px;text-align:center;transform:scaleX(0.849);transform-origin:center center;">49</div>
<div class="a" style="left:0px;top:1199px;width:25px;height:1px;background:#ababab;"></div>
<div class="t" style="top:1183.5px;font-size:12.5px;line-height:16px;height:16px;color:#262626;left:-13.9px;width:53.9px;text-align:center;transform:scaleX(0.849);transform-origin:center center;">50</div>
<div class="a" style="left:0px;top:1216px;width:25px;height:1px;background:#ababab;"></div>
<div class="t" style="top:1200.5px;font-size:12.5px;line-height:16px;height:16px;color:#262626;left:-13.9px;width:53.9px;text-align:center;transform:scaleX(0.849);transform-origin:center center;">51</div>
<div class="a" style="left:0px;top:1233px;width:25px;height:1px;background:#ababab;"></div>
<div class="t" style="top:1217.5px;font-size:12.5px;line-height:16px;height:16px;color:#262626;left:-13.9px;width:53.9px;text-align:center;transform:scaleX(0.849);transform-origin:center center;">52</div>
<div class="a" style="left:0px;top:1250px;width:25px;height:1px;background:#ababab;"></div>
<div class="t" style="top:1234.5px;font-size:12.5px;line-height:16px;height:16px;color:#262626;left:-13.9px;width:53.9px;text-align:center;transform:scaleX(0.849);transform-origin:center center;">53</div>
<div class="a" style="left:0px;top:1267px;width:25px;height:1px;background:#ababab;"></div>
<div class="t" style="top:1251.5px;font-size:12.5px;line-height:16px;height:16px;color:#262626;left:-13.9px;width:53.9px;text-align:center;transform:scaleX(0.849);transform-origin:center center;">54</div>
<div class="a" style="left:0px;top:1284px;width:25px;height:1px;background:#ababab;"></div>
<div class="t" style="top:1268.5px;font-size:12.5px;line-height:16px;height:16px;color:#262626;left:-13.9px;width:53.9px;text-align:center;transform:scaleX(0.849);transform-origin:center center;">55</div>
<div class="a" style="left:0px;top:1301px;width:25px;height:1px;background:#ababab;"></div>
<div class="t" style="top:1285.5px;font-size:12.5px;line-height:16px;height:16px;color:#262626;left:-13.9px;width:53.9px;text-align:center;transform:scaleX(0.849);transform-origin:center center;">56</div>
<div class="a" style="left:0px;top:1318px;width:25px;height:1px;background:#ababab;"></div>
<div class="t" style="top:1302.5px;font-size:12.5px;line-height:16px;height:16px;color:#262626;left:-13.9px;width:53.9px;text-align:center;transform:scaleX(0.849);transform-origin:center center;">57</div>
<div class="a" style="left:0px;top:1335px;width:25px;height:1px;background:#ababab;"></div>
<div class="t" style="top:1319.5px;font-size:12.5px;line-height:16px;height:16px;color:#262626;left:-13.9px;width:53.9px;text-align:center;transform:scaleX(0.849);transform-origin:center center;">58</div>
<div class="a" style="left:0px;top:1352px;width:25px;height:1px;background:#ababab;"></div>
<div class="t" style="top:1336.5px;font-size:12.5px;line-height:16px;height:16px;color:#262626;left:-13.9px;width:53.9px;text-align:center;transform:scaleX(0.849);transform-origin:center center;">59</div>
<div class="a" style="left:0px;top:1369px;width:25px;height:1px;background:#ababab;"></div>
<div class="t" style="top:1353.5px;font-size:12.5px;line-height:16px;height:16px;color:#262626;left:-13.9px;width:53.9px;text-align:center;transform:scaleX(0.849);transform-origin:center center;">60</div>
<div class="a" style="left:0px;top:1386px;width:25px;height:1px;background:#ababab;"></div>
<div class="t" style="top:1370.5px;font-size:12.5px;line-height:16px;height:16px;color:#262626;left:-13.9px;width:53.9px;text-align:center;transform:scaleX(0.849);transform-origin:center center;">61</div>
<div class="a" style="left:0px;top:1403px;width:25px;height:1px;background:#ababab;"></div>
<div class="t" style="top:1387.5px;font-size:12.5px;line-height:16px;height:16px;color:#262626;left:-13.9px;width:53.9px;text-align:center;transform:scaleX(0.849);transform-origin:center center;">62</div>
<div class="a" style="left:0px;top:1420px;width:25px;height:1px;background:#ababab;"></div>
<div class="t" style="top:1404.5px;font-size:12.5px;line-height:16px;height:16px;color:#262626;left:-13.9px;width:53.9px;text-align:center;transform:scaleX(0.849);transform-origin:center center;">63</div>
<div class="a" style="left:0px;top:1437px;width:25px;height:1px;background:#ababab;"></div>
<div class="t" style="top:1421.5px;font-size:12.5px;line-height:16px;height:16px;color:#262626;left:-13.9px;width:53.9px;text-align:center;transform:scaleX(0.849);transform-origin:center center;">64</div>
<div class="a" style="left:0px;top:1454px;width:25px;height:1px;background:#ababab;"></div>
<div class="t" style="top:1438.5px;font-size:12.5px;line-height:16px;height:16px;color:#262626;left:-13.9px;width:53.9px;text-align:center;transform:scaleX(0.849);transform-origin:center center;">65</div>
<div class="a" style="left:0px;top:1471px;width:25px;height:1px;background:#ababab;"></div>
<div class="t" style="top:1455.5px;font-size:12.5px;line-height:16px;height:16px;color:#262626;left:-13.9px;width:53.9px;text-align:center;transform:scaleX(0.849);transform-origin:center center;">66</div>
<div class="a" style="left:0px;top:1488px;width:25px;height:1px;background:#ababab;"></div>
<div class="t" style="top:1472.5px;font-size:12.5px;line-height:16px;height:16px;color:#262626;left:-13.9px;width:53.9px;text-align:center;transform:scaleX(0.849);transform-origin:center center;">67</div>
<div class="t" style="top:1489.5px;font-size:12.5px;line-height:16px;height:16px;color:#262626;left:-13.9px;width:53.9px;text-align:center;transform:scaleX(0.849);transform-origin:center center;clip-path:inset(0 0 6.3px 0);">68</div>
<div class="a" style="left:26px;top:272px;width:223px;height:22px;background:#bdd7ee;"></div>
<div class="a" style="left:248px;top:272px;width:163px;height:22px;background:#bfbfbf;"></div>
<div class="a" style="left:410px;top:272px;width:892px;height:22px;background:#bdd7ee;"></div>
<div class="t" style="top:276.0px;font-size:13.8px;line-height:18px;height:18px;font-weight:bold;left:28.2px;transform:scaleX(0.961);transform-origin:left center;">FREE CASH FLOWS to FIRM</div>
<div class="t" style="top:277.5px;font-size:11.5px;line-height:15px;height:15px;font-weight:bold;font-style:italic;left:282.8px;width:92.4px;text-align:center;transform:scaleX(0.964);transform-origin:center center;">Historical</div>
<div class="t" style="top:277.5px;font-size:11.5px;line-height:15px;height:15px;font-weight:bold;font-style:italic;left:806.7px;width:97.5px;text-align:center;transform:scaleX(0.939);transform-origin:center center;">Pro Forma</div>
<div class="t" style="top:312.5px;font-size:11.5px;line-height:15px;height:15px;font-weight:bold;text-decoration:underline;left:337.2px;width:65.6px;text-align:center;transform:scaleX(1.036);transform-origin:center center;">2019</div>
<div class="t" style="top:312.5px;font-size:11.5px;line-height:15px;height:15px;font-weight:bold;text-decoration:underline;left:418.2px;width:65.6px;text-align:center;transform:scaleX(1.036);transform-origin:center center;">2020</div>
<div class="t" style="top:312.5px;font-size:11.5px;line-height:15px;height:15px;font-weight:bold;text-decoration:underline;left:499.2px;width:65.6px;text-align:center;transform:scaleX(1.036);transform-origin:center center;">2021</div>
<div class="t" style="top:312.5px;font-size:11.5px;line-height:15px;height:15px;font-weight:bold;text-decoration:underline;left:580.2px;width:65.6px;text-align:center;transform:scaleX(1.036);transform-origin:center center;">2022</div>
<div class="t" style="top:312.5px;font-size:11.5px;line-height:15px;height:15px;font-weight:bold;text-decoration:underline;left:661.2px;width:65.6px;text-align:center;transform:scaleX(1.036);transform-origin:center center;">2023</div>
<div class="t" style="top:312.5px;font-size:11.5px;line-height:15px;height:15px;font-weight:bold;text-decoration:underline;left:742.2px;width:65.6px;text-align:center;transform:scaleX(1.036);transform-origin:center center;">2024</div>
<div class="t" style="top:312.5px;font-size:11.5px;line-height:15px;height:15px;font-weight:bold;text-decoration:underline;left:823.2px;width:65.6px;text-align:center;transform:scaleX(1.036);transform-origin:center center;">2025</div>
<div class="t" style="top:312.5px;font-size:11.5px;line-height:15px;height:15px;font-weight:bold;text-decoration:underline;left:904.2px;width:65.6px;text-align:center;transform:scaleX(1.036);transform-origin:center center;">2026</div>
<div class="t" style="top:312.5px;font-size:11.5px;line-height:15px;height:15px;font-weight:bold;text-decoration:underline;left:985.2px;width:65.6px;text-align:center;transform:scaleX(1.036);transform-origin:center center;">2027</div>
<div class="t" style="top:312.5px;font-size:11.5px;line-height:15px;height:15px;font-weight:bold;text-decoration:underline;left:1066.2px;width:65.6px;text-align:center;transform:scaleX(1.036);transform-origin:center center;">2028</div>
<div class="t" style="top:312.5px;font-size:11.5px;line-height:15px;height:15px;font-weight:bold;text-decoration:underline;left:1147.2px;width:65.6px;text-align:center;transform:scaleX(1.036);transform-origin:center center;">2029</div>
<div class="t" style="top:312.5px;font-size:11.5px;line-height:15px;height:15px;font-weight:bold;text-decoration:underline;left:1228.2px;width:65.6px;text-align:center;transform:scaleX(1.036);transform-origin:center center;">2029</div>
<div class="t" style="top:295.5px;font-size:11.5px;line-height:15px;height:15px;font-weight:bold;text-decoration:underline;left:1217.0px;width:87.1px;text-align:center;transform:scaleX(1.020);transform-origin:center center;">Terminal</div>
<div class="a" style="left:1284px;top:309px;width:3px;height:1px;background:#000;"></div>
<div class="t" style="top:312.5px;font-size:11.5px;line-height:15px;height:15px;font-weight:bold;font-style:italic;left:1327.0px;transform:scaleX(1.006);transform-origin:left center;">Audit Trail</div>
<div class="a" style="left:329px;top:378px;width:82px;height:52px;background:#f2f2f2;"></div>
<div class="t" style="top:380.7px;font-size:11.5px;line-height:15px;height:15px;left:28.0px;transform:scaleX(1.023);transform-origin:left center;">FCF (per share) - lower</div>
<div class="t" style="top:397.7px;font-size:11.5px;line-height:15px;height:15px;left:28.0px;transform:scaleX(0.993);transform-origin:left center;">FCF (per share)</div>
<div class="t" style="top:414.7px;font-size:11.5px;line-height:15px;height:15px;left:28.0px;transform:scaleX(1.015);transform-origin:left center;">FCF (per share) - upper</div>
<div class="t" style="top:431.7px;font-size:11.5px;line-height:15px;height:15px;left:28.0px;transform:scaleX(1.090);transform-origin:left center;">Terminal value (future value) - lower</div>
<div class="t" style="top:448.7px;font-size:11.5px;line-height:15px;height:15px;left:28.0px;transform:scaleX(1.089);transform-origin:left center;">Terminal value (future value)</div>
<div class="t" style="top:465.7px;font-size:11.5px;line-height:15px;height:15px;left:28.0px;transform:scaleX(1.084);transform-origin:left center;">Terminal value (future value) - upper</div>
<div class="t" style="top:499.7px;font-size:11.5px;line-height:15px;height:15px;left:28.0px;transform:scaleX(1.036);transform-origin:left center;">Cost of Equity</div>
<div class="t" style="top:516.7px;font-size:11.5px;line-height:15px;height:15px;left:28.0px;transform:scaleX(1.070);transform-origin:left center;">Discount Factor</div>
<div class="t" style="top:533.7px;font-size:11.5px;line-height:15px;height:15px;left:28.0px;transform:scaleX(1.026);transform-origin:left center;">Present Value of FCF - lower</div>
<div class="t" style="top:550.7px;font-size:11.5px;line-height:15px;height:15px;left:28.0px;transform:scaleX(1.004);transform-origin:left center;">Present Value of FCF</div>
<div class="t" style="top:567.7px;font-size:11.5px;line-height:15px;height:15px;left:28.0px;transform:scaleX(1.019);transform-origin:left center;">Present Value of FCF - upper</div>
<div class="t" style="top:601.7px;font-size:11.5px;line-height:15px;height:15px;left:28.0px;transform:scaleX(1.070);transform-origin:left center;">Total Present Value - lower</div>
<div class="t" style="top:619.7px;font-size:11.5px;line-height:15px;height:15px;left:28.0px;transform:scaleX(1.064);transform-origin:left center;">Total Present Value</div>
<div class="t" style="top:637.7px;font-size:11.5px;line-height:15px;height:15px;left:28.0px;transform:scaleX(1.063);transform-origin:left center;">Total Present Value - upper</div>
<div class="t" style="top:720.7px;font-size:11.5px;line-height:15px;height:15px;left:28.0px;transform:scaleX(0.939);transform-origin:left center;">WACC</div>
<div class="t" style="top:737.7px;font-size:11.5px;line-height:15px;height:15px;left:28.0px;transform:scaleX(1.040);transform-origin:left center;">Estimated Growth Rate</div>
<div class="t" style="top:754.7px;font-size:11.5px;line-height:15px;height:15px;left:28.0px;transform:scaleX(1.066);transform-origin:left center;">Terminal Growth Rate</div>
<div class="t" style="top:771.7px;font-size:11.5px;line-height:15px;height:15px;left:28.0px;transform:scaleX(1.070);transform-origin:left center;">Terminal Discount Rate</div>
<div class="t" style="top:380.7px;font-size:11.5px;line-height:15px;height:15px;left:335.8px;">$</div>
<div class="t" style="top:380.7px;font-size:11.5px;line-height:15px;height:15px;right:1371.7px;transform:scaleX(1.050);transform-origin:right center;">4.00</div>
<div class="t" style="top:380.7px;font-size:11.5px;line-height:15px;height:15px;left:416.8px;">$</div>
<div class="t" style="top:380.7px;font-size:11.5px;line-height:15px;height:15px;right:1290.7px;transform:scaleX(1.050);transform-origin:right center;">4.24</div>
<div class="t" style="top:380.7px;font-size:11.5px;line-height:15px;height:15px;left:497.8px;">$</div>
<div class="t" style="top:380.7px;font-size:11.5px;line-height:15px;height:15px;right:1209.7px;transform:scaleX(1.050);transform-origin:right center;">4.49</div>
<div class="t" style="top:380.7px;font-size:11.5px;line-height:15px;height:15px;left:578.8px;">$</div>
<div class="t" style="top:380.7px;font-size:11.5px;line-height:15px;height:15px;right:1128.7px;transform:scaleX(1.050);transform-origin:right center;">4.76</div>
<div class="t" style="top:380.7px;font-size:11.5px;line-height:15px;height:15px;left:659.8px;">$</div>
<div class="t" style="top:380.7px;font-size:11.5px;line-height:15px;height:15px;right:1047.7px;transform:scaleX(1.050);transform-origin:right center;">5.05</div>
<div class="t" style="top:380.7px;font-size:11.5px;line-height:15px;height:15px;left:740.8px;">$</div>
<div class="t" style="top:380.7px;font-size:11.5px;line-height:15px;height:15px;right:966.7px;transform:scaleX(1.050);transform-origin:right center;">5.35</div>
<div class="t" style="top:380.7px;font-size:11.5px;line-height:15px;height:15px;left:821.8px;">$</div>
<div class="t" style="top:380.7px;font-size:11.5px;line-height:15px;height:15px;right:885.7px;transform:scaleX(1.050);transform-origin:right center;">5.67</div>
<div class="t" style="top:380.7px;font-size:11.5px;line-height:15px;height:15px;left:902.8px;">$</div>
<div class="t" style="top:380.7px;font-size:11.5px;line-height:15px;height:15px;right:804.7px;transform:scaleX(1.050);transform-origin:right center;">6.01</div>
<div class="t" style="top:380.7px;font-size:11.5px;line-height:15px;height:15px;left:983.8px;">$</div>
<div class="t" style="top:380.7px;font-size:11.5px;line-height:15px;height:15px;right:723.7px;transform:scaleX(1.050);transform-origin:right center;">6.38</div>
<div class="t" style="top:380.7px;font-size:11.5px;line-height:15px;height:15px;left:1064.8px;">$</div>
<div class="t" style="top:380.7px;font-size:11.5px;line-height:15px;height:15px;right:642.7px;transform:scaleX(1.050);transform-origin:right center;">6.76</div>
<div class="t" style="top:380.7px;font-size:11.5px;line-height:15px;height:15px;left:1145.8px;">$</div>
<div class="t" style="top:380.7px;font-size:11.5px;line-height:15px;height:15px;right:561.7px;transform:scaleX(1.050);transform-origin:right center;">7.16</div>
<div class="t" style="top:380.7px;font-size:11.5px;line-height:15px;height:15px;left:1226.8px;">$</div>
<div class="t" style="top:380.7px;font-size:11.5px;line-height:15px;height:15px;right:480.7px;transform:scaleX(1.050);transform-origin:right center;">7.16</div>
<div class="t" style="top:397.7px;font-size:11.5px;line-height:15px;height:15px;left:335.8px;">$</div>
<div class="t" style="top:397.7px;font-size:11.5px;line-height:15px;height:15px;right:1371.7px;transform:scaleX(1.050);transform-origin:right center;">4.16</div>
<div class="t" style="top:397.7px;font-size:11.5px;line-height:15px;height:15px;left:416.8px;">$</div>
<div class="t" style="top:397.7px;font-size:11.5px;line-height:15px;height:15px;right:1290.7px;transform:scaleX(1.050);transform-origin:right center;">4.41</div>
<div class="t" style="top:397.7px;font-size:11.5px;line-height:15px;height:15px;left:497.8px;">$</div>
<div class="t" style="top:397.7px;font-size:11.5px;line-height:15px;height:15px;right:1209.7px;transform:scaleX(1.050);transform-origin:right center;">4.67</div>
<div class="t" style="top:397.7px;font-size:11.5px;line-height:15px;height:15px;left:578.8px;">$</div>
<div class="t" style="top:397.7px;font-size:11.5px;line-height:15px;height:15px;right:1128.7px;transform:scaleX(1.050);transform-origin:right center;">4.95</div>
<div class="t" style="top:397.7px;font-size:11.5px;line-height:15px;height:15px;left:659.8px;">$</div>
<div class="t" style="top:397.7px;font-size:11.5px;line-height:15px;height:15px;right:1047.7px;transform:scaleX(1.050);transform-origin:right center;">5.25</div>
<div class="t" style="top:397.7px;font-size:11.5px;line-height:15px;height:15px;left:740.8px;">$</div>
<div class="t" style="top:397.7px;font-size:11.5px;line-height:15px;height:15px;right:966.7px;transform:scaleX(1.050);transform-origin:right center;">5.57</div>
<div class="t" style="top:397.7px;font-size:11.5px;line-height:15px;height:15px;left:821.8px;">$</div>
<div class="t" style="top:397.7px;font-size:11.5px;line-height:15px;height:15px;right:885.7px;transform:scaleX(1.050);transform-origin:right center;">5.90</div>
<div class="t" style="top:397.7px;font-size:11.5px;line-height:15px;height:15px;left:902.8px;">$</div>
<div class="t" style="top:397.7px;font-size:11.5px;line-height:15px;height:15px;right:804.7px;transform:scaleX(1.050);transform-origin:right center;">6.26</div>
<div class="t" style="top:397.7px;font-size:11.5px;line-height:15px;height:15px;left:983.8px;">$</div>
<div class="t" style="top:397.7px;font-size:11.5px;line-height:15px;height:15px;right:723.7px;transform:scaleX(1.050);transform-origin:right center;">6.63</div>
<div class="t" style="top:397.7px;font-size:11.5px;line-height:15px;height:15px;left:1064.8px;">$</div>
<div class="t" style="top:397.7px;font-size:11.5px;line-height:15px;height:15px;right:642.7px;transform:scaleX(1.050);transform-origin:right center;">7.03</div>
<div class="t" style="top:397.7px;font-size:11.5px;line-height:15px;height:15px;left:1145.8px;">$</div>
<div class="t" style="top:397.7px;font-size:11.5px;line-height:15px;height:15px;right:561.7px;transform:scaleX(1.050);transform-origin:right center;">7.45</div>
<div class="t" style="top:397.7px;font-size:11.5px;line-height:15px;height:15px;left:1226.8px;">$</div>
<div class="t" style="top:397.7px;font-size:11.5px;line-height:15px;height:15px;right:480.7px;transform:scaleX(1.050);transform-origin:right center;">7.45</div>
<div class="t" style="top:414.7px;font-size:11.5px;line-height:15px;height:15px;left:335.8px;">$</div>
<div class="t" style="top:414.7px;font-size:11.5px;line-height:15px;height:15px;right:1371.7px;transform:scaleX(1.050);transform-origin:right center;">4.50</div>
<div class="t" style="top:414.7px;font-size:11.5px;line-height:15px;height:15px;left:416.8px;">$</div>
<div class="t" style="top:414.7px;font-size:11.5px;line-height:15px;height:15px;right:1290.7px;transform:scaleX(1.050);transform-origin:right center;">4.77</div>
<div class="t" style="top:414.7px;font-size:11.5px;line-height:15px;height:15px;left:497.8px;">$</div>
<div class="t" style="top:414.7px;font-size:11.5px;line-height:15px;height:15px;right:1209.7px;transform:scaleX(1.050);transform-origin:right center;">5.06</div>
<div class="t" style="top:414.7px;font-size:11.5px;line-height:15px;height:15px;left:578.8px;">$</div>
<div class="t" style="top:414.7px;font-size:11.5px;line-height:15px;height:15px;right:1128.7px;transform:scaleX(1.050);transform-origin:right center;">5.36</div>
<div class="t" style="top:414.7px;font-size:11.5px;line-height:15px;height:15px;left:659.8px;">$</div>
<div class="t" style="top:414.7px;font-size:11.5px;line-height:15px;height:15px;right:1047.7px;transform:scaleX(1.050);transform-origin:right center;">5.68</div>
<div class="t" style="top:414.7px;font-size:11.5px;line-height:15px;height:15px;left:740.8px;">$</div>
<div class="t" style="top:414.7px;font-size:11.5px;line-height:15px;height:15px;right:966.7px;transform:scaleX(1.050);transform-origin:right center;">6.02</div>
<div class="t" style="top:414.7px;font-size:11.5px;line-height:15px;height:15px;left:821.8px;">$</div>
<div class="t" style="top:414.7px;font-size:11.5px;line-height:15px;height:15px;right:885.7px;transform:scaleX(1.050);transform-origin:right center;">6.38</div>
<div class="t" style="top:414.7px;font-size:11.5px;line-height:15px;height:15px;left:902.8px;">$</div>
<div class="t" style="top:414.7px;font-size:11.5px;line-height:15px;height:15px;right:804.7px;transform:scaleX(1.050);transform-origin:right center;">6.77</div>
<div class="t" style="top:414.7px;font-size:11.5px;line-height:15px;height:15px;left:983.8px;">$</div>
<div class="t" style="top:414.7px;font-size:11.5px;line-height:15px;height:15px;right:723.7px;transform:scaleX(1.050);transform-origin:right center;">7.17</div>
<div class="t" style="top:414.7px;font-size:11.5px;line-height:15px;height:15px;left:1064.8px;">$</div>
<div class="t" style="top:414.7px;font-size:11.5px;line-height:15px;height:15px;right:642.7px;transform:scaleX(1.050);transform-origin:right center;">7.60</div>
<div class="t" style="top:414.7px;font-size:11.5px;line-height:15px;height:15px;left:1145.8px;">$</div>
<div class="t" style="top:414.7px;font-size:11.5px;line-height:15px;height:15px;right:561.7px;transform:scaleX(1.050);transform-origin:right center;">8.06</div>
<div class="t" style="top:414.7px;font-size:11.5px;line-height:15px;height:15px;left:1226.8px;">$</div>
<div class="t" style="top:414.7px;font-size:11.5px;line-height:15px;height:15px;right:480.7px;transform:scaleX(1.050);transform-origin:right center;">8.06</div>
<div class="t" style="top:431.7px;font-size:11.5px;line-height:15px;height:15px;left:1226.8px;">$</div>
<div class="t" style="top:431.7px;font-size:11.5px;line-height:15px;height:15px;right:480.7px;transform:scaleX(1.050);transform-origin:right center;">143.27</div>
<div class="t" style="top:448.7px;font-size:11.5px;line-height:15px;height:15px;left:1226.8px;">$</div>
<div class="t" style="top:448.7px;font-size:11.5px;line-height:15px;height:15px;right:480.7px;transform:scaleX(1.050);transform-origin:right center;">149.00</div>
<div class="t" style="top:465.7px;font-size:11.5px;line-height:15px;height:15px;left:1226.8px;">$</div>
<div class="t" style="top:465.7px;font-size:11.5px;line-height:15px;height:15px;right:480.7px;transform:scaleX(1.050);transform-origin:right center;">161.18</div>
<div class="t" style="top:499.7px;font-size:11.5px;line-height:15px;height:15px;right:1285.2px;transform:scaleX(1.020);transform-origin:right center;">7.0%</div>
<div class="t" style="top:499.7px;font-size:11.5px;line-height:15px;height:15px;right:1204.2px;transform:scaleX(1.020);transform-origin:right center;">7.0%</div>
<div class="t" style="top:499.7px;font-size:11.5px;line-height:15px;height:15px;right:1123.2px;transform:scaleX(1.020);transform-origin:right center;">7.0%</div>
<div class="t" style="top:499.7px;font-size:11.5px;line-height:15px;height:15px;right:1042.2px;transform:scaleX(1.020);transform-origin:right center;">7.0%</div>
<div class="t" style="top:499.7px;font-size:11.5px;line-height:15px;height:15px;right:961.2px;transform:scaleX(1.020);transform-origin:right center;">7.0%</div>
<div class="t" style="top:499.7px;font-size:11.5px;line-height:15px;height:15px;right:880.2px;transform:scaleX(1.020);transform-origin:right center;">7.0%</div>
<div class="t" style="top:499.7px;font-size:11.5px;line-height:15px;height:15px;right:799.2px;transform:scaleX(1.020);transform-origin:right center;">7.0%</div>
<div class="t" style="top:499.7px;font-size:11.5px;line-height:15px;height:15px;right:718.2px;transform:scaleX(1.020);transform-origin:right center;">7.0%</div>
<div class="t" style="top:499.7px;font-size:11.5px;line-height:15px;height:15px;right:637.2px;transform:scaleX(1.020);transform-origin:right center;">7.0%</div>
<div class="t" style="top:499.7px;font-size:11.5px;line-height:15px;height:15px;right:556.2px;transform:scaleX(1.020);transform-origin:right center;">10.5%</div>
<div class="t" style="top:499.7px;font-size:11.5px;line-height:15px;height:15px;right:475.2px;transform:scaleX(1.020);transform-origin:right center;">10.5%</div>
<div class="t" style="top:516.7px;font-size:11.5px;line-height:15px;height:15px;right:1287.0px;transform:scaleX(1.050);transform-origin:right center;">0.93</div>
<div class="t" style="top:516.7px;font-size:11.5px;line-height:15px;height:15px;right:1206.0px;transform:scaleX(1.050);transform-origin:right center;">0.87</div>
<div class="t" style="top:516.7px;font-size:11.5px;line-height:15px;height:15px;right:1125.0px;transform:scaleX(1.050);transform-origin:right center;">0.82</div>
<div class="t" style="top:516.7px;font-size:11.5px;line-height:15px;height:15px;right:1044.0px;transform:scaleX(1.050);transform-origin:right center;">0.76</div>
<div class="t" style="top:516.7px;font-size:11.5px;line-height:15px;height:15px;right:963.0px;transform:scaleX(1.050);transform-origin:right center;">0.71</div>
<div class="t" style="top:516.7px;font-size:11.5px;line-height:15px;height:15px;right:882.0px;transform:scaleX(1.050);transform-origin:right center;">0.67</div>
<div class="t" style="top:516.7px;font-size:11.5px;line-height:15px;height:15px;right:801.0px;transform:scaleX(1.050);transform-origin:right center;">0.62</div>
<div class="t" style="top:516.7px;font-size:11.5px;line-height:15px;height:15px;right:720.0px;transform:scaleX(1.050);transform-origin:right center;">0.58</div>
<div class="t" style="top:516.7px;font-size:11.5px;line-height:15px;height:15px;right:639.0px;transform:scaleX(1.050);transform-origin:right center;">0.54</div>
<div class="t" style="top:516.7px;font-size:11.5px;line-height:15px;height:15px;right:558.0px;transform:scaleX(1.050);transform-origin:right center;">0.37</div>
<div class="t" style="top:516.7px;font-size:11.5px;line-height:15px;height:15px;right:477.0px;transform:scaleX(1.050);transform-origin:right center;">0.37</div>
<div class="t" style="top:533.7px;font-size:11.5px;line-height:15px;height:15px;left:416.8px;">$</div>
<div class="t" style="top:533.7px;font-size:11.5px;line-height:15px;height:15px;right:1290.7px;transform:scaleX(1.050);transform-origin:right center;">3.96</div>
<div class="t" style="top:533.7px;font-size:11.5px;line-height:15px;height:15px;left:497.8px;">$</div>
<div class="t" style="top:533.7px;font-size:11.5px;line-height:15px;height:15px;right:1209.7px;transform:scaleX(1.050);transform-origin:right center;">3.93</div>
<div class="t" style="top:533.7px;font-size:11.5px;line-height:15px;height:15px;left:578.8px;">$</div>
<div class="t" style="top:533.7px;font-size:11.5px;line-height:15px;height:15px;right:1128.7px;transform:scaleX(1.050);transform-origin:right center;">3.89</div>
<div class="t" style="top:533.7px;font-size:11.5px;line-height:15px;height:15px;left:659.8px;">$</div>
<div class="t" style="top:533.7px;font-size:11.5px;line-height:15px;height:15px;right:1047.7px;transform:scaleX(1.050);transform-origin:right center;">3.85</div>
<div class="t" style="top:533.7px;font-size:11.5px;line-height:15px;height:15px;left:740.8px;">$</div>
<div class="t" style="top:533.7px;font-size:11.5px;line-height:15px;height:15px;right:966.7px;transform:scaleX(1.050);transform-origin:right center;">3.82</div>
<div class="t" style="top:533.7px;font-size:11.5px;line-height:15px;height:15px;left:821.8px;">$</div>
<div class="t" style="top:533.7px;font-size:11.5px;line-height:15px;height:15px;right:885.7px;transform:scaleX(1.050);transform-origin:right center;">3.78</div>
<div class="t" style="top:533.7px;font-size:11.5px;line-height:15px;height:15px;left:902.8px;">$</div>
<div class="t" style="top:533.7px;font-size:11.5px;line-height:15px;height:15px;right:804.7px;transform:scaleX(1.050);transform-origin:right center;">3.75</div>
<div class="t" style="top:533.7px;font-size:11.5px;line-height:15px;height:15px;left:983.8px;">$</div>
<div class="t" style="top:533.7px;font-size:11.5px;line-height:15px;height:15px;right:723.7px;transform:scaleX(1.050);transform-origin:right center;">3.71</div>
<div class="t" style="top:533.7px;font-size:11.5px;line-height:15px;height:15px;left:1064.8px;">$</div>
<div class="t" style="top:533.7px;font-size:11.5px;line-height:15px;height:15px;right:642.7px;transform:scaleX(1.050);transform-origin:right center;">3.68</div>
<div class="t" style="top:533.7px;font-size:11.5px;line-height:15px;height:15px;left:1145.8px;">$</div>
<div class="t" style="top:533.7px;font-size:11.5px;line-height:15px;height:15px;right:561.7px;transform:scaleX(1.050);transform-origin:right center;">2.64</div>
<div class="t" style="top:533.7px;font-size:11.5px;line-height:15px;height:15px;left:1226.8px;">$</div>
<div class="t" style="top:533.7px;font-size:11.5px;line-height:15px;height:15px;right:480.7px;transform:scaleX(1.050);transform-origin:right center;">52.79</div>
<div class="t" style="top:550.7px;font-size:11.5px;line-height:15px;height:15px;left:416.8px;">$</div>
<div class="t" style="top:550.7px;font-size:11.5px;line-height:15px;height:15px;right:1290.7px;transform:scaleX(1.050);transform-origin:right center;">4.12</div>
<div class="t" style="top:550.7px;font-size:11.5px;line-height:15px;height:15px;left:497.8px;">$</div>
<div class="t" style="top:550.7px;font-size:11.5px;line-height:15px;height:15px;right:1209.7px;transform:scaleX(1.050);transform-origin:right center;">4.08</div>
<div class="t" style="top:550.7px;font-size:11.5px;line-height:15px;height:15px;left:578.8px;">$</div>
<div class="t" style="top:550.7px;font-size:11.5px;line-height:15px;height:15px;right:1128.7px;transform:scaleX(1.050);transform-origin:right center;">4.04</div>
<div class="t" style="top:550.7px;font-size:11.5px;line-height:15px;height:15px;left:659.8px;">$</div>
<div class="t" style="top:550.7px;font-size:11.5px;line-height:15px;height:15px;right:1047.7px;transform:scaleX(1.050);transform-origin:right center;">4.01</div>
<div class="t" style="top:550.7px;font-size:11.5px;line-height:15px;height:15px;left:740.8px;">$</div>
<div class="t" style="top:550.7px;font-size:11.5px;line-height:15px;height:15px;right:966.7px;transform:scaleX(1.050);transform-origin:right center;">3.97</div>
<div class="t" style="top:550.7px;font-size:11.5px;line-height:15px;height:15px;left:821.8px;">$</div>
<div class="t" style="top:550.7px;font-size:11.5px;line-height:15px;height:15px;right:885.7px;transform:scaleX(1.050);transform-origin:right center;">3.93</div>
<div class="t" style="top:550.7px;font-size:11.5px;line-height:15px;height:15px;left:902.8px;">$</div>
<div class="t" style="top:550.7px;font-size:11.5px;line-height:15px;height:15px;right:804.7px;transform:scaleX(1.050);transform-origin:right center;">3.90</div>
<div class="t" style="top:550.7px;font-size:11.5px;line-height:15px;height:15px;left:983.8px;">$</div>
<div class="t" style="top:550.7px;font-size:11.5px;line-height:15px;height:15px;right:723.7px;transform:scaleX(1.050);transform-origin:right center;">3.86</div>
<div class="t" style="top:550.7px;font-size:11.5px;line-height:15px;height:15px;left:1064.8px;">$</div>
<div class="t" style="top:550.7px;font-size:11.5px;line-height:15px;height:15px;right:642.7px;transform:scaleX(1.050);transform-origin:right center;">3.82</div>
<div class="t" style="top:550.7px;font-size:11.5px;line-height:15px;height:15px;left:1145.8px;">$</div>
<div class="t" style="top:550.7px;font-size:11.5px;line-height:15px;height:15px;right:561.7px;transform:scaleX(1.050);transform-origin:right center;">2.74</div>
<div class="t" style="top:550.7px;font-size:11.5px;line-height:15px;height:15px;left:1226.8px;">$</div>
<div class="t" style="top:550.7px;font-size:11.5px;line-height:15px;height:15px;right:480.7px;transform:scaleX(1.050);transform-origin:right center;">54.90</div>
<div class="t" style="top:567.7px;font-size:11.5px;line-height:15px;height:15px;left:416.8px;">$</div>
<div class="t" style="top:567.7px;font-size:11.5px;line-height:15px;height:15px;right:1290.7px;transform:scaleX(1.050);transform-origin:right center;">4.46</div>
<div class="t" style="top:567.7px;font-size:11.5px;line-height:15px;height:15px;left:497.8px;">$</div>
<div class="t" style="top:567.7px;font-size:11.5px;line-height:15px;height:15px;right:1209.7px;transform:scaleX(1.050);transform-origin:right center;">4.42</div>
<div class="t" style="top:567.7px;font-size:11.5px;line-height:15px;height:15px;left:578.8px;">$</div>
<div class="t" style="top:567.7px;font-size:11.5px;line-height:15px;height:15px;right:1128.7px;transform:scaleX(1.050);transform-origin:right center;">4.38</div>
<div class="t" style="top:567.7px;font-size:11.5px;line-height:15px;height:15px;left:659.8px;">$</div>
<div class="t" style="top:567.7px;font-size:11.5px;line-height:15px;height:15px;right:1047.7px;transform:scaleX(1.050);transform-origin:right center;">4.33</div>
<div class="t" style="top:567.7px;font-size:11.5px;line-height:15px;height:15px;left:740.8px;">$</div>
<div class="t" style="top:567.7px;font-size:11.5px;line-height:15px;height:15px;right:966.7px;transform:scaleX(1.050);transform-origin:right center;">4.29</div>
<div class="t" style="top:567.7px;font-size:11.5px;line-height:15px;height:15px;left:821.8px;">$</div>
<div class="t" style="top:567.7px;font-size:11.5px;line-height:15px;height:15px;right:885.7px;transform:scaleX(1.050);transform-origin:right center;">4.25</div>
<div class="t" style="top:567.7px;font-size:11.5px;line-height:15px;height:15px;left:902.8px;">$</div>
<div class="t" style="top:567.7px;font-size:11.5px;line-height:15px;height:15px;right:804.7px;transform:scaleX(1.050);transform-origin:right center;">4.21</div>
<div class="t" style="top:567.7px;font-size:11.5px;line-height:15px;height:15px;left:983.8px;">$</div>
<div class="t" style="top:567.7px;font-size:11.5px;line-height:15px;height:15px;right:723.7px;transform:scaleX(1.050);transform-origin:right center;">4.17</div>
<div class="t" style="top:567.7px;font-size:11.5px;line-height:15px;height:15px;left:1064.8px;">$</div>
<div class="t" style="top:567.7px;font-size:11.5px;line-height:15px;height:15px;right:642.7px;transform:scaleX(1.050);transform-origin:right center;">4.14</div>
<div class="t" style="top:567.7px;font-size:11.5px;line-height:15px;height:15px;left:1145.8px;">$</div>
<div class="t" style="top:567.7px;font-size:11.5px;line-height:15px;height:15px;right:561.7px;transform:scaleX(1.050);transform-origin:right center;">2.97</div>
<div class="t" style="top:567.7px;font-size:11.5px;line-height:15px;height:15px;left:1226.8px;">$</div>
<div class="t" style="top:567.7px;font-size:11.5px;line-height:15px;height:15px;right:480.7px;transform:scaleX(1.050);transform-origin:right center;">59.39</div>
<div class="t" style="top:431.7px;font-size:11.5px;line-height:15px;height:15px;left:1327.0px;transform:scaleX(1.080);transform-origin:left center;">Terminal Cash flow / (Cost of equity - long term growth rate)</div>
<div class="t" style="top:516.7px;font-size:11.5px;line-height:15px;height:15px;left:1327.0px;transform:scaleX(1.059);transform-origin:left center;">1 / (1 + Cost of equity)^(Model Year - Current Year)</div>
<div class="t" style="top:533.7px;font-size:11.5px;line-height:15px;height:15px;left:1327.0px;transform:scaleX(1.069);transform-origin:left center;">FCF to equity / Discount factor</div>
<div class="a" style="left:1324px;top:273px;width:1px;height:961px;background:#000;"></div>
<div class="a" style="left:329px;top:599px;width:82px;height:19px;background:#fce4d6;"></div>
<div class="a" style="left:329px;top:617px;width:82px;height:19px;background:#e2efda;"></div>
<div class="a" style="left:329px;top:635px;width:82px;height:19px;background:#ddebf7;"></div>
<div class="a" style="left:329px;top:599px;width:82px;height:1px;background:#000;"></div>
<div class="a" style="left:329px;top:616px;width:82px;height:1px;background:#000;"></div>
<div class="a" style="left:329px;top:618px;width:82px;height:1px;background:#000;"></div>
<div class="a" style="left:329px;top:634px;width:82px;height:1px;background:#000;"></div>
<div class="a" style="left:329px;top:636px;width:82px;height:1px;background:#000;"></div>
<div class="a" style="left:329px;top:652px;width:82px;height:1px;background:#000;"></div>
<div class="a" style="left:329px;top:654px;width:82px;height:1px;background:#000;"></div>
<div class="a" style="left:329px;top:617px;width:82px;height:1px;background:#fff;"></div>
<div class="a" style="left:329px;top:635px;width:82px;height:1px;background:#fff;"></div>
<div class="a" style="left:329px;top:653px;width:82px;height:1px;background:#fff;"></div>
<div class="t" style="top:601.8px;font-size:11.5px;line-height:15px;height:15px;left:335.8px;">$</div>
<div class="t" style="top:601.8px;font-size:11.5px;line-height:15px;height:15px;right:1371.7px;transform:scaleX(1.050);transform-origin:right center;">89.79</div>
<div class="t" style="top:619.8px;font-size:11.5px;line-height:15px;height:15px;left:335.8px;">$</div>
<div class="t" style="top:619.8px;font-size:11.5px;line-height:15px;height:15px;right:1371.7px;transform:scaleX(1.050);transform-origin:right center;">93.38</div>
<div class="t" style="top:637.8px;font-size:11.5px;line-height:15px;height:15px;left:335.8px;">$</div>
<div class="t" style="top:637.8px;font-size:11.5px;line-height:15px;height:15px;right:1371.7px;transform:scaleX(1.050);transform-origin:right center;">101.01</div>
<div class="a" style="left:248px;top:718px;width:82px;height:69px;background:#f2f2f2;"></div>
<div class="a" style="left:26px;top:701px;width:304px;height:1px;background:#000;"></div>
<div class="a" style="left:329px;top:701px;width:1px;height:86px;background:#000;"></div>
<div class="a" style="left:26px;top:786px;width:304px;height:1px;background:#000;"></div>
<div class="t" style="top:703.7px;font-size:11.5px;line-height:15px;height:15px;font-weight:bold;font-style:italic;left:28.0px;transform:scaleX(0.974);transform-origin:left center;">Inputs</div>
<div class="t" style="top:720.7px;font-size:11.5px;line-height:15px;height:15px;right:1447.2px;transform:scaleX(1.020);transform-origin:right center;">7.0%</div>
<div class="t" style="top:737.7px;font-size:11.5px;line-height:15px;height:15px;right:1447.2px;transform:scaleX(1.020);transform-origin:right center;">6.0%</div>
<div class="t" style="top:754.7px;font-size:11.5px;line-height:15px;height:15px;right:1447.2px;transform:scaleX(1.020);transform-origin:right center;">2.0%</div>
<div class="t" style="top:771.7px;font-size:11.5px;line-height:15px;height:15px;right:1447.2px;transform:scaleX(1.020);transform-origin:right center;">10.5%</div>
<svg class="a" style="left:247px;top:735px;" width="84" height="19" viewBox="0 0 84 19" fill="none"><rect x="1.500" y="1.500" width="81" height="16.500" stroke="#fff" stroke-width="2"/><rect x="1.500" y="1.500" width="81" height="16.500" stroke="#1f7244" stroke-width="1.600" stroke-dasharray="3.400 1.800"/></svg>
<div class="t" style="top:866.5px;font-size:11.5px;line-height:15px;height:15px;text-decoration:underline;left:28.0px;transform:scaleX(1.042);transform-origin:left center;">FCF assumptions - lower</div>
<div class="t" style="top:954.7px;font-size:11.5px;line-height:15px;height:15px;text-decoration:underline;left:28.0px;transform:scaleX(1.040);transform-origin:left center;">FCF assumptions - mid</div>
<div class="t" style="top:1049.5px;font-size:11.5px;line-height:15px;height:15px;text-decoration:underline;left:28.0px;transform:scaleX(1.037);transform-origin:left center;">FCF assumptions - upper</div>
<div class="t" style="top:886.7px;font-size:11.5px;line-height:15px;height:15px;left:251.3px;">$</div>
<div class="t" style="top:903.7px;font-size:11.5px;line-height:15px;height:15px;left:251.3px;">$</div>
<div class="t" style="top:920.7px;font-size:11.5px;line-height:15px;height:15px;left:251.3px;">$</div>
<div class="t" style="top:971.7px;font-size:11.5px;line-height:15px;height:15px;left:251.3px;">$</div>
<div class="t" style="top:988.7px;font-size:11.5px;line-height:15px;height:15px;left:251.3px;">$</div>
<div class="t" style="top:1005.7px;font-size:11.5px;line-height:15px;height:15px;left:251.3px;">$</div>
<div class="t" style="top:1099.7px;font-size:11.5px;line-height:15px;height:15px;left:251.3px;">$</div>
<div class="t" style="top:1116.7px;font-size:11.5px;line-height:15px;height:15px;left:251.3px;">$</div>
<div class="t" style="top:1079.9px;font-size:11.5px;line-height:15px;height:15px;left:251.3px;">$</div>
<div class="t" style="top:657.5px;font-size:20.3px;line-height:26px;height:26px;font-weight:bold;text-decoration:underline;left:618.2px;width:150.5px;text-align:center;transform:scaleX(0.957);transform-origin:center center;text-decoration-thickness:2px;text-underline-offset:2.500px;">FCF - lower</div>
<div class="a" style="left:410px;top:701px;width:568px;height:120px;background:#fce4d6;"></div>
<div class="a" style="left:492px;top:719px;width:242px;height:101px;background:#fff;"></div>
<div class="a" style="left:816px;top:719px;width:161px;height:101px;background:#fff;"></div>
<div class="a" style="left:491px;top:769px;width:487px;height:18px;background:#fce4d6;"></div>
<div class="a" style="left:410px;top:701px;width:566px;height:118px;border:1px solid #000"></div>
<div class="t" style="top:703.7px;font-size:11.5px;line-height:15px;height:15px;font-weight:bold;left:575.0px;transform:scaleX(1.020);transform-origin:left center;">Terminal Growth Rate</div>
<div class="v" style="left:396.0px;top:763.2px;transform:rotate(-90deg) scaleX(0.969)">FCF Growth Rate</div>
<div class="t" style="top:720.7px;font-size:11.5px;line-height:15px;height:15px;left:497.8px;">$</div>
<div class="t" style="top:720.7px;font-size:11.5px;line-height:15px;height:15px;right:1209.7px;transform:scaleX(1.050);transform-origin:right center;">89.79</div>
<div class="t" style="top:720.7px;font-size:11.5px;line-height:15px;height:15px;font-weight:bold;right:1123.2px;transform:scaleX(1.020);transform-origin:right center;">0%</div>
<div class="t" style="top:720.7px;font-size:11.5px;line-height:15px;height:15px;font-weight:bold;right:1042.2px;transform:scaleX(1.020);transform-origin:right center;">1%</div>
<div class="t" style="top:720.7px;font-size:11.5px;line-height:15px;height:15px;font-weight:bold;right:961.2px;transform:scaleX(1.020);transform-origin:right center;">2%</div>
<div class="t" style="top:720.7px;font-size:11.5px;line-height:15px;height:15px;font-weight:bold;right:880.2px;transform:scaleX(1.020);transform-origin:right center;">3%</div>
<div class="t" style="top:720.7px;font-size:11.5px;line-height:15px;height:15px;font-weight:bold;right:799.2px;transform:scaleX(1.020);transform-origin:right center;">4%</div>
<div class="t" style="top:737.7px;font-size:11.5px;line-height:15px;height:15px;font-weight:bold;right:1204.7px;transform:scaleX(1.020);transform-origin:right center;">4%</div>
<div class="t" style="top:737.7px;font-size:11.5px;line-height:15px;height:15px;left:578.8px;">$</div>
<div class="t" style="top:737.7px;font-size:11.5px;line-height:15px;height:15px;right:1128.7px;transform:scaleX(1.050);transform-origin:right center;">64.66</div>
<div class="t" style="top:737.7px;font-size:11.5px;line-height:15px;height:15px;left:659.8px;">$</div>
<div class="t" style="top:737.7px;font-size:11.5px;line-height:15px;height:15px;right:1047.7px;transform:scaleX(1.050);transform-origin:right center;">69.85</div>
<div class="t" style="top:737.7px;font-size:11.5px;line-height:15px;height:15px;left:740.8px;">$</div>
<div class="t" style="top:737.7px;font-size:11.5px;line-height:15px;height:15px;right:966.7px;transform:scaleX(1.050);transform-origin:right center;">77.13</div>
<div class="t" style="top:737.7px;font-size:11.5px;line-height:15px;height:15px;left:821.8px;">$</div>
<div class="t" style="top:737.7px;font-size:11.5px;line-height:15px;height:15px;right:885.7px;transform:scaleX(1.050);transform-origin:right center;">88.03</div>
<div class="t" style="top:737.7px;font-size:11.5px;line-height:15px;height:15px;left:902.8px;">$</div>
<div class="t" style="top:737.7px;font-size:11.5px;line-height:15px;height:15px;right:804.7px;transform:scaleX(1.050);transform-origin:right center;">106.21</div>
<div class="t" style="top:754.7px;font-size:11.5px;line-height:15px;height:15px;font-weight:bold;right:1204.7px;transform:scaleX(1.020);transform-origin:right center;">5%</div>
<div class="t" style="top:754.7px;font-size:11.5px;line-height:15px;height:15px;left:578.8px;">$</div>
<div class="t" style="top:754.7px;font-size:11.5px;line-height:15px;height:15px;right:1128.7px;transform:scaleX(1.050);transform-origin:right center;">69.49</div>
<div class="t" style="top:754.7px;font-size:11.5px;line-height:15px;height:15px;left:659.8px;">$</div>
<div class="t" style="top:754.7px;font-size:11.5px;line-height:15px;height:15px;right:1047.7px;transform:scaleX(1.050);transform-origin:right center;">75.21</div>
<div class="t" style="top:754.7px;font-size:11.5px;line-height:15px;height:15px;left:740.8px;">$</div>
<div class="t" style="top:754.7px;font-size:11.5px;line-height:15px;height:15px;right:966.7px;transform:scaleX(1.050);transform-origin:right center;">83.21</div>
<div class="t" style="top:754.7px;font-size:11.5px;line-height:15px;height:15px;left:821.8px;">$</div>
<div class="t" style="top:754.7px;font-size:11.5px;line-height:15px;height:15px;right:885.7px;transform:scaleX(1.050);transform-origin:right center;">95.21</div>
<div class="t" style="top:754.7px;font-size:11.5px;line-height:15px;height:15px;left:902.8px;">$</div>
<div class="t" style="top:754.7px;font-size:11.5px;line-height:15px;height:15px;right:804.7px;transform:scaleX(1.050);transform-origin:right center;">115.22</div>
<div class="t" style="top:771.7px;font-size:11.5px;line-height:15px;height:15px;font-weight:bold;right:1204.7px;transform:scaleX(1.020);transform-origin:right center;">6%</div>
<div class="t" style="top:771.7px;font-size:11.5px;line-height:15px;height:15px;left:578.8px;">$</div>
<div class="t" style="top:771.7px;font-size:11.5px;line-height:15px;height:15px;right:1128.7px;transform:scaleX(1.050);transform-origin:right center;">74.70</div>
<div class="t" style="top:771.7px;font-size:11.5px;line-height:15px;height:15px;left:659.8px;">$</div>
<div class="t" style="top:771.7px;font-size:11.5px;line-height:15px;height:15px;right:1047.7px;transform:scaleX(1.050);transform-origin:right center;">80.99</div>
<div class="t" style="top:771.7px;font-size:11.5px;line-height:15px;height:15px;left:740.8px;">$</div>
<div class="t" style="top:771.7px;font-size:11.5px;line-height:15px;height:15px;right:966.7px;transform:scaleX(1.050);transform-origin:right center;">89.79</div>
<div class="t" style="top:771.7px;font-size:11.5px;line-height:15px;height:15px;left:821.8px;">$</div>
<div class="t" style="top:771.7px;font-size:11.5px;line-height:15px;height:15px;right:885.7px;transform:scaleX(1.050);transform-origin:right center;">102.98</div>
<div class="t" style="top:771.7px;font-size:11.5px;line-height:15px;height:15px;left:902.8px;">$</div>
<div class="t" style="top:771.7px;font-size:11.5px;line-height:15px;height:15px;right:804.7px;transform:scaleX(1.050);transform-origin:right center;">124.98</div>
<div class="t" style="top:788.7px;font-size:11.5px;line-height:15px;height:15px;font-weight:bold;right:1204.7px;transform:scaleX(1.020);transform-origin:right center;">7%</div>
<div class="t" style="top:788.7px;font-size:11.5px;line-height:15px;height:15px;left:578.8px;">$</div>
<div class="t" style="top:788.7px;font-size:11.5px;line-height:15px;height:15px;right:1128.7px;transform:scaleX(1.050);transform-origin:right center;">80.32</div>
<div class="t" style="top:788.7px;font-size:11.5px;line-height:15px;height:15px;left:659.8px;">$</div>
<div class="t" style="top:788.7px;font-size:11.5px;line-height:15px;height:15px;right:1047.7px;transform:scaleX(1.050);transform-origin:right center;">87.22</div>
<div class="t" style="top:788.7px;font-size:11.5px;line-height:15px;height:15px;left:740.8px;">$</div>
<div class="t" style="top:788.7px;font-size:11.5px;line-height:15px;height:15px;right:966.7px;transform:scaleX(1.050);transform-origin:right center;">96.88</div>
<div class="t" style="top:788.7px;font-size:11.5px;line-height:15px;height:15px;left:821.8px;">$</div>
<div class="t" style="top:788.7px;font-size:11.5px;line-height:15px;height:15px;right:885.7px;transform:scaleX(1.050);transform-origin:right center;">111.38</div>
<div class="t" style="top:788.7px;font-size:11.5px;line-height:15px;height:15px;left:902.8px;">$</div>
<div class="t" style="top:788.7px;font-size:11.5px;line-height:15px;height:15px;right:804.7px;transform:scaleX(1.050);transform-origin:right center;">135.54</div>
<div class="t" style="top:805.7px;font-size:11.5px;line-height:15px;height:15px;font-weight:bold;right:1204.7px;transform:scaleX(1.020);transform-origin:right center;">8%</div>
<div class="t" style="top:805.7px;font-size:11.5px;line-height:15px;height:15px;left:578.8px;">$</div>
<div class="t" style="top:805.7px;font-size:11.5px;line-height:15px;height:15px;right:1128.7px;transform:scaleX(1.050);transform-origin:right center;">86.36</div>
<div class="t" style="top:805.7px;font-size:11.5px;line-height:15px;height:15px;left:659.8px;">$</div>
<div class="t" style="top:805.7px;font-size:11.5px;line-height:15px;height:15px;right:1047.7px;transform:scaleX(1.050);transform-origin:right center;">93.94</div>
<div class="t" style="top:805.7px;font-size:11.5px;line-height:15px;height:15px;left:740.8px;">$</div>
<div class="t" style="top:805.7px;font-size:11.5px;line-height:15px;height:15px;right:966.7px;transform:scaleX(1.050);transform-origin:right center;">104.54</div>
<div class="t" style="top:805.7px;font-size:11.5px;line-height:15px;height:15px;left:821.8px;">$</div>
<div class="t" style="top:805.7px;font-size:11.5px;line-height:15px;height:15px;right:885.7px;transform:scaleX(1.050);transform-origin:right center;">120.45</div>
<div class="t" style="top:805.7px;font-size:11.5px;line-height:15px;height:15px;left:902.8px;">$</div>
<div class="t" style="top:805.7px;font-size:11.5px;line-height:15px;height:15px;right:804.7px;transform:scaleX(1.050);transform-origin:right center;">146.97</div>
<div class="a" style="left:491px;top:735px;width:485px;height:1px;background:repeating-linear-gradient(90deg,#000 0 1px,transparent 1px 2px)"></div>
<div class="a" style="left:571px;top:719px;width:1px;height:101px;background:repeating-linear-gradient(0deg,#000 0 1px,transparent 1px 2px)"></div>
<div class="a" style="left:572px;top:718px;width:404px;height:1px;background:repeating-linear-gradient(90deg,#000 0 1px,transparent 1px 2px)"></div>
<div class="a" style="left:490px;top:736px;width:1px;height:84px;background:repeating-linear-gradient(0deg,#000 0 1px,transparent 1px 2px)"></div>
<div class="t" style="top:857.5px;font-size:20.3px;line-height:26px;height:26px;font-weight:bold;text-decoration:underline;left:626.7px;width:133.6px;text-align:center;transform:scaleX(0.940);transform-origin:center center;text-decoration-thickness:2px;text-underline-offset:2.500px;">FCF - mid</div>
<div class="a" style="left:410px;top:901px;width:568px;height:120px;background:#e2efda;"></div>
<div class="a" style="left:491px;top:918px;width:487px;height:103px;background:#c6c6c6;"></div>
<div class="a" style="left:734px;top:918px;width:82px;height:103px;background:#b0bbaa;"></div>
<div class="a" style="left:491px;top:969px;width:487px;height:18px;background:#b0bbaa;"></div>
<div class="a" style="left:491px;top:918px;width:82px;height:18px;background:#fff;"></div>
<div class="a" style="left:410px;top:901px;width:566px;height:118px;border:1px solid #000"></div>
<div class="t" style="top:903.7px;font-size:11.5px;line-height:15px;height:15px;font-weight:bold;left:575.0px;transform:scaleX(1.020);transform-origin:left center;">Terminal Growth Rate</div>
<div class="v" style="left:396.0px;top:963.2px;transform:rotate(-90deg) scaleX(0.969)">FCF Growth Rate</div>
<div class="t" style="top:920.7px;font-size:11.5px;line-height:15px;height:15px;left:497.8px;">$</div>
<div class="t" style="top:920.7px;font-size:11.5px;line-height:15px;height:15px;right:1209.7px;transform:scaleX(1.050);transform-origin:right center;">93.38</div>
<div class="t" style="top:920.7px;font-size:11.5px;line-height:15px;height:15px;font-weight:bold;right:1123.2px;transform:scaleX(1.020);transform-origin:right center;">0%</div>
<div class="t" style="top:920.7px;font-size:11.5px;line-height:15px;height:15px;font-weight:bold;right:1042.2px;transform:scaleX(1.020);transform-origin:right center;">1%</div>
<div class="t" style="top:920.7px;font-size:11.5px;line-height:15px;height:15px;font-weight:bold;right:961.2px;transform:scaleX(1.020);transform-origin:right center;">2%</div>
<div class="t" style="top:920.7px;font-size:11.5px;line-height:15px;height:15px;font-weight:bold;right:880.2px;transform:scaleX(1.020);transform-origin:right center;">3%</div>
<div class="t" style="top:920.7px;font-size:11.5px;line-height:15px;height:15px;font-weight:bold;right:799.2px;transform:scaleX(1.020);transform-origin:right center;">4%</div>
<div class="t" style="top:937.7px;font-size:11.5px;line-height:15px;height:15px;font-weight:bold;right:1204.7px;transform:scaleX(1.020);transform-origin:right center;">4%</div>
<div class="t" style="top:954.7px;font-size:11.5px;line-height:15px;height:15px;font-weight:bold;right:1204.7px;transform:scaleX(1.020);transform-origin:right center;">5%</div>
<div class="t" style="top:971.7px;font-size:11.5px;line-height:15px;height:15px;font-weight:bold;right:1204.7px;transform:scaleX(1.020);transform-origin:right center;">6%</div>
<div class="t" style="top:988.7px;font-size:11.5px;line-height:15px;height:15px;font-weight:bold;right:1204.7px;transform:scaleX(1.020);transform-origin:right center;">7%</div>
<div class="t" style="top:1005.7px;font-size:11.5px;line-height:15px;height:15px;font-weight:bold;right:1204.7px;transform:scaleX(1.020);transform-origin:right center;">8%</div>
<div class="a" style="left:491px;top:935px;width:485px;height:1px;background:repeating-linear-gradient(90deg,#000 0 1px,transparent 1px 2px)"></div>
<div class="a" style="left:571px;top:919px;width:1px;height:101px;background:repeating-linear-gradient(0deg,#000 0 1px,transparent 1px 2px)"></div>
<div class="t" style="top:1070.5px;font-size:20.3px;line-height:26px;height:26px;font-weight:bold;text-decoration:underline;left:613.7px;width:159.5px;text-align:center;transform:scaleX(0.933);transform-origin:center center;text-decoration-thickness:2px;text-underline-offset:2.500px;">FCF - higher</div>
<div class="a" style="left:410px;top:1114px;width:568px;height:120px;background:#ddebf7;"></div>
<div class="a" style="left:492px;top:1132px;width:242px;height:101px;background:#fff;"></div>
<div class="a" style="left:816px;top:1132px;width:161px;height:101px;background:#fff;"></div>
<div class="a" style="left:491px;top:1182px;width:487px;height:18px;background:#ddebf7;"></div>
<div class="a" style="left:410px;top:1114px;width:566px;height:118px;border:1px solid #000"></div>
<div class="t" style="top:1116.7px;font-size:11.5px;line-height:15px;height:15px;font-weight:bold;left:575.0px;transform:scaleX(1.020);transform-origin:left center;">Terminal Growth Rate</div>
<div class="v" style="left:396.0px;top:1176.2px;transform:rotate(-90deg) scaleX(0.969)">FCF Growth Rate</div>
<div class="t" style="top:1133.7px;font-size:11.5px;line-height:15px;height:15px;left:497.8px;">$</div>
<div class="t" style="top:1133.7px;font-size:11.5px;line-height:15px;height:15px;right:1209.7px;transform:scaleX(1.050);transform-origin:right center;">101.01</div>
<div class="t" style="top:1133.7px;font-size:11.5px;line-height:15px;height:15px;font-weight:bold;right:1123.2px;transform:scaleX(1.020);transform-origin:right center;">0%</div>
<div class="t" style="top:1133.7px;font-size:11.5px;line-height:15px;height:15px;font-weight:bold;right:1042.2px;transform:scaleX(1.020);transform-origin:right center;">1%</div>
<div class="t" style="top:1133.7px;font-size:11.5px;line-height:15px;height:15px;font-weight:bold;right:961.2px;transform:scaleX(1.020);transform-origin:right center;">2%</div>
<div class="t" style="top:1133.7px;font-size:11.5px;line-height:15px;height:15px;font-weight:bold;right:880.2px;transform:scaleX(1.020);transform-origin:right center;">3%</div>
<div class="t" style="top:1133.7px;font-size:11.5px;line-height:15px;height:15px;font-weight:bold;right:799.2px;transform:scaleX(1.020);transform-origin:right center;">4%</div>
<div class="t" style="top:1150.7px;font-size:11.5px;line-height:15px;height:15px;font-weight:bold;right:1204.7px;transform:scaleX(1.020);transform-origin:right center;">4%</div>
<div class="t" style="top:1150.7px;font-size:11.5px;line-height:15px;height:15px;left:578.8px;">$</div>
<div class="t" style="top:1150.7px;font-size:11.5px;line-height:15px;height:15px;right:1128.7px;transform:scaleX(1.050);transform-origin:right center;">72.74</div>
<div class="t" style="top:1150.7px;font-size:11.5px;line-height:15px;height:15px;left:659.8px;">$</div>
<div class="t" style="top:1150.7px;font-size:11.5px;line-height:15px;height:15px;right:1047.7px;transform:scaleX(1.050);transform-origin:right center;">78.59</div>
<div class="t" style="top:1150.7px;font-size:11.5px;line-height:15px;height:15px;left:740.8px;">$</div>
<div class="t" style="top:1150.7px;font-size:11.5px;line-height:15px;height:15px;right:966.7px;transform:scaleX(1.050);transform-origin:right center;">86.77</div>
<div class="t" style="top:1150.7px;font-size:11.5px;line-height:15px;height:15px;left:821.8px;">$</div>
<div class="t" style="top:1150.7px;font-size:11.5px;line-height:15px;height:15px;right:885.7px;transform:scaleX(1.050);transform-origin:right center;">99.04</div>
<div class="t" style="top:1150.7px;font-size:11.5px;line-height:15px;height:15px;left:902.8px;">$</div>
<div class="t" style="top:1150.7px;font-size:11.5px;line-height:15px;height:15px;right:804.7px;transform:scaleX(1.050);transform-origin:right center;">119.49</div>
<div class="t" style="top:1167.7px;font-size:11.5px;line-height:15px;height:15px;font-weight:bold;right:1204.7px;transform:scaleX(1.020);transform-origin:right center;">5%</div>
<div class="t" style="top:1167.7px;font-size:11.5px;line-height:15px;height:15px;left:578.8px;">$</div>
<div class="t" style="top:1167.7px;font-size:11.5px;line-height:15px;height:15px;right:1128.7px;transform:scaleX(1.050);transform-origin:right center;">78.18</div>
<div class="t" style="top:1167.7px;font-size:11.5px;line-height:15px;height:15px;left:659.8px;">$</div>
<div class="t" style="top:1167.7px;font-size:11.5px;line-height:15px;height:15px;right:1047.7px;transform:scaleX(1.050);transform-origin:right center;">84.61</div>
<div class="t" style="top:1167.7px;font-size:11.5px;line-height:15px;height:15px;left:740.8px;">$</div>
<div class="t" style="top:1167.7px;font-size:11.5px;line-height:15px;height:15px;right:966.7px;transform:scaleX(1.050);transform-origin:right center;">93.61</div>
<div class="t" style="top:1167.7px;font-size:11.5px;line-height:15px;height:15px;left:821.8px;">$</div>
<div class="t" style="top:1167.7px;font-size:11.5px;line-height:15px;height:15px;right:885.7px;transform:scaleX(1.050);transform-origin:right center;">107.12</div>
<div class="t" style="top:1167.7px;font-size:11.5px;line-height:15px;height:15px;left:902.8px;">$</div>
<div class="t" style="top:1167.7px;font-size:11.5px;line-height:15px;height:15px;right:804.7px;transform:scaleX(1.050);transform-origin:right center;">129.62</div>
<div class="t" style="top:1184.7px;font-size:11.5px;line-height:15px;height:15px;font-weight:bold;right:1204.7px;transform:scaleX(1.020);transform-origin:right center;">6%</div>
<div class="t" style="top:1184.7px;font-size:11.5px;line-height:15px;height:15px;left:578.8px;">$</div>
<div class="t" style="top:1184.7px;font-size:11.5px;line-height:15px;height:15px;right:1128.7px;transform:scaleX(1.050);transform-origin:right center;">84.04</div>
<div class="t" style="top:1184.7px;font-size:11.5px;line-height:15px;height:15px;left:659.8px;">$</div>
<div class="t" style="top:1184.7px;font-size:11.5px;line-height:15px;height:15px;right:1047.7px;transform:scaleX(1.050);transform-origin:right center;">91.11</div>
<div class="t" style="top:1184.7px;font-size:11.5px;line-height:15px;height:15px;left:740.8px;">$</div>
<div class="t" style="top:1184.7px;font-size:11.5px;line-height:15px;height:15px;right:966.7px;transform:scaleX(1.050);transform-origin:right center;">101.01</div>
<div class="t" style="top:1184.7px;font-size:11.5px;line-height:15px;height:15px;left:821.8px;">$</div>
<div class="t" style="top:1184.7px;font-size:11.5px;line-height:15px;height:15px;right:885.7px;transform:scaleX(1.050);transform-origin:right center;">115.85</div>
<div class="t" style="top:1184.7px;font-size:11.5px;line-height:15px;height:15px;left:902.8px;">$</div>
<div class="t" style="top:1184.7px;font-size:11.5px;line-height:15px;height:15px;right:804.7px;transform:scaleX(1.050);transform-origin:right center;">140.60</div>
<div class="t" style="top:1201.7px;font-size:11.5px;line-height:15px;height:15px;font-weight:bold;right:1204.7px;transform:scaleX(1.020);transform-origin:right center;">7%</div>
<div class="t" style="top:1201.7px;font-size:11.5px;line-height:15px;height:15px;left:578.8px;">$</div>
<div class="t" style="top:1201.7px;font-size:11.5px;line-height:15px;height:15px;right:1128.7px;transform:scaleX(1.050);transform-origin:right center;">90.36</div>
<div class="t" style="top:1201.7px;font-size:11.5px;line-height:15px;height:15px;left:659.8px;">$</div>
<div class="t" style="top:1201.7px;font-size:11.5px;line-height:15px;height:15px;right:1047.7px;transform:scaleX(1.050);transform-origin:right center;">98.12</div>
<div class="t" style="top:1201.7px;font-size:11.5px;line-height:15px;height:15px;left:740.8px;">$</div>
<div class="t" style="top:1201.7px;font-size:11.5px;line-height:15px;height:15px;right:966.7px;transform:scaleX(1.050);transform-origin:right center;">108.99</div>
<div class="t" style="top:1201.7px;font-size:11.5px;line-height:15px;height:15px;left:821.8px;">$</div>
<div class="t" style="top:1201.7px;font-size:11.5px;line-height:15px;height:15px;right:885.7px;transform:scaleX(1.050);transform-origin:right center;">125.30</div>
<div class="t" style="top:1201.7px;font-size:11.5px;line-height:15px;height:15px;left:902.8px;">$</div>
<div class="t" style="top:1201.7px;font-size:11.5px;line-height:15px;height:15px;right:804.7px;transform:scaleX(1.050);transform-origin:right center;">152.49</div>
<div class="t" style="top:1218.7px;font-size:11.5px;line-height:15px;height:15px;font-weight:bold;right:1204.7px;transform:scaleX(1.020);transform-origin:right center;">8%</div>
<div class="t" style="top:1218.7px;font-size:11.5px;line-height:15px;height:15px;left:578.8px;">$</div>
<div class="t" style="top:1218.7px;font-size:11.5px;line-height:15px;height:15px;right:1128.7px;transform:scaleX(1.050);transform-origin:right center;">97.16</div>
<div class="t" style="top:1218.7px;font-size:11.5px;line-height:15px;height:15px;left:659.8px;">$</div>
<div class="t" style="top:1218.7px;font-size:11.5px;line-height:15px;height:15px;right:1047.7px;transform:scaleX(1.050);transform-origin:right center;">105.68</div>
<div class="t" style="top:1218.7px;font-size:11.5px;line-height:15px;height:15px;left:740.8px;">$</div>
<div class="t" style="top:1218.7px;font-size:11.5px;line-height:15px;height:15px;right:966.7px;transform:scaleX(1.050);transform-origin:right center;">117.61</div>
<div class="t" style="top:1218.7px;font-size:11.5px;line-height:15px;height:15px;left:821.8px;">$</div>
<div class="t" style="top:1218.7px;font-size:11.5px;line-height:15px;height:15px;right:885.7px;transform:scaleX(1.050);transform-origin:right center;">135.51</div>
<div class="t" style="top:1218.7px;font-size:11.5px;line-height:15px;height:15px;left:902.8px;">$</div>
<div class="t" style="top:1218.7px;font-size:11.5px;line-height:15px;height:15px;right:804.7px;transform:scaleX(1.050);transform-origin:right center;">165.34</div>
<div class="a" style="left:491px;top:1148px;width:485px;height:1px;background:repeating-linear-gradient(90deg,#000 0 1px,transparent 1px 2px)"></div>
<div class="a" style="left:571px;top:1132px;width:1px;height:101px;background:repeating-linear-gradient(0deg,#000 0 1px,transparent 1px 2px)"></div>
<div class="a" style="left:572px;top:1131px;width:404px;height:1px;background:repeating-linear-gradient(90deg,#000 0 1px,transparent 1px 2px)"></div>
<div class="a" style="left:490px;top:1149px;width:1px;height:84px;background:repeating-linear-gradient(0deg,#000 0 1px,transparent 1px 2px)"></div>
<div class="a" style="left:489px;top:916px;width:489px;height:105px;border:1px solid #f3f8f0"></div>
<div class="a" style="left:490px;top:917px;width:485px;height:101px;border:2px solid #0f6a37"></div>
<div class="a" style="left:492px;top:919px;width:483px;height:99px;border:1px solid #fff"></div>
<div class="a" style="left:974px;top:1017px;width:7px;height:7px;background:#fff;"></div>
<div class="a" style="left:975px;top:1018px;width:5px;height:5px;background:#1f7346;"></div>
<div class="a" style="left:0px;top:272px;width:491px;height:1px;background:#9d9d9d;"></div>
<div class="a" style="left:977px;top:272px;width:777px;height:1px;background:#9d9d9d;"></div>
<div class="a" style="left:491px;top:271px;width:486px;height:2px;background:#1e7145;"></div>
<div class="a" style="left:1754px;top:256px;width:21px;height:1243px;background:#e6e6e6;"></div>
<div class="a" style="left:1753px;top:272px;width:1px;height:1227px;background:#a3a3a3;"></div>
<div class="a" style="left:1757px;top:258px;width:17px;height:17px;border:1px solid #b8b8b8;background:#fff"></div>
<svg class="a" style="left:1761.5px;top:263px;" width="10" height="7" viewBox="0 0 10 7" fill="none"><path d="M0.300 6h9.400L5 0.800z" fill="#606060"/></svg>
<div class="a" style="left:1757px;top:277px;width:17px;height:1183px;border:1px solid #b8b8b8;background:#fff"></div>
<div class="a" style="left:1757px;top:1481px;width:17px;height:17px;border:1px solid #b8b8b8;background:#fff"></div>
<svg class="a" style="left:1761px;top:1487px;" width="10" height="7" viewBox="0 0 10 7" fill="none"><path d="M0.500 1h9L5 6z" fill="#606060"/></svg>
<div class="a" style="left:1757px;top:1462px;width:18px;height:19px;background:#d6d6d6;"></div>
<div class="a" style="left:0px;top:1499px;width:1775px;height:30px;background:#e6e6e6;"></div>
<div class="a" style="left:0px;top:1499px;width:1754px;height:1px;background:#9e9e9e;"></div>
<div class="a" style="left:0px;top:1528px;width:1775px;height:1px;background:#c9c9c9;"></div>
<svg class="a" style="left:27px;top:1507px;" width="8" height="12" viewBox="0 0 8 12" fill="none"><path d="M6.500 1v10L1 6z" fill="#c3c3c3"/></svg>
<svg class="a" style="left:55px;top:1507px;" width="8" height="12" viewBox="0 0 8 12" fill="none"><path d="M1.500 1v10L7 6z" fill="#c3c3c3"/></svg>
<div class="a" style="left:103px;top:1503px;width:1px;height:21px;background:#8f8f8f;"></div>
<div class="a" style="left:106px;top:1502px;width:133px;height:23px;background:#adb9ca;"></div>
<div class="t" style="top:1500.0px;font-size:15.8px;line-height:21px;height:21px;color:#1f1f1f;left:100.6px;width:141.6px;text-align:center;transform:scaleX(1.063);transform-origin:center center;">DCF Valuation</div>
<div class="a" style="left:242px;top:1499px;width:152px;height:25px;background:linear-gradient(#fff 50%,#fff3d0)"></div>
<div class="a" style="left:241px;top:1499px;width:1px;height:26px;background:#9e9e9e;"></div>
<div class="a" style="left:394px;top:1499px;width:1px;height:26px;background:#9e9e9e;"></div>
<div class="a" style="left:241px;top:1523px;width:154px;height:2px;background:#217346;"></div>
<div class="t" style="top:1500.0px;font-size:15.8px;line-height:21px;height:21px;color:#1e6b41;font-weight:bold;left:235.8px;width:163.8px;text-align:center;transform:scaleX(1.042);transform-origin:center center;">Sensitivity - FCF</div>
<div class="a" style="left:397px;top:1502px;width:149px;height:23px;background:#ffe699;"></div>
<div class="t" style="top:1500.0px;font-size:15.8px;line-height:21px;height:21px;color:#1f1f1f;left:393.6px;width:155.9px;text-align:center;transform:scaleX(1.048);transform-origin:center center;">Sensitivity - DRs</div>
<div class="a" style="left:548px;top:1503px;width:1px;height:21px;background:#8f8f8f;"></div>
<svg class="a" style="left:581px;top:1503px;" width="22" height="22" viewBox="0 0 22 22" fill="none"><circle cx="10.800" cy="10.800" r="9.300" stroke="#c8c8c8" stroke-width="1.400"/><path d="M10.800 6v9.600M6 10.800h9.600" stroke="#c8c8c8" stroke-width="1.500"/></svg>
<div class="a" style="left:1549px;top:1507px;width:3px;height:3px;background:#a0a0a0;"></div>
<div class="a" style="left:1549px;top:1512px;width:3px;height:3px;background:#a0a0a0;"></div>
<div class="a" style="left:1549px;top:1517px;width:3px;height:3px;background:#a0a0a0;"></div>
<div class="a" style="left:1567px;top:1504px;width:17px;height:17px;border:1px solid #c2c2c2;background:#fff"></div>
<svg class="a" style="left:1572px;top:1508px;" width="7" height="10" viewBox="0 0 7 10" fill="none"><path d="M6 0.500v9L1 5z" fill="#606060"/></svg>
<div class="a" style="left:1586px;top:1504px;width:140px;height:17px;border:1px solid #c2c2c2;background:#fff"></div>
<div class="a" style="left:1735px;top:1504px;width:17px;height:17px;border:1px solid #c2c2c2;background:#fff"></div>
<svg class="a" style="left:1741px;top:1508px;" width="7" height="10" viewBox="0 0 7 10" fill="none"><path d="M1 0.500v9L6 5z" fill="#606060"/></svg>
<div class="a" style="left:1728px;top:1505px;width:7px;height:18px;background:#d6d6d6;"></div>
<div class="a" style="left:0px;top:1529px;width:1775px;height:22px;background:#f3f2f1;"></div>
<div class="t" style="top:1534.8px;font-size:12.6px;line-height:16px;height:16px;color:#505050;left:10.0px;transform:scaleX(1.010);transform-origin:left center;">Point</div>
<svg class="a" style="left:70px;top:1534px;" width="20" height="18" viewBox="0 0 20 18" fill="none"><rect x="1" y="1.200" width="16.300" height="13.800" stroke="#6a6a6a" stroke-width="1.600"/><path d="M1 4.200h16.300" stroke="#6a6a6a" stroke-width="1.300"/><path d="M3.500 7.500h4M3.500 10.500h3" stroke="#6a6a6a" stroke-width="1.400"/><circle cx="12.200" cy="11.200" r="5.200" fill="#f3f2f1" stroke="#5c5c5c" stroke-width="1.500"/><circle cx="12.200" cy="11.200" r="2.300" fill="#4a4a4a"/></svg>
<svg class="a" style="left:1416px;top:1533px;" width="18" height="17" viewBox="0 0 18 17" fill="none"><g stroke="#c2c0be" stroke-width="1.400"><rect x="1" y="1" width="15.500" height="15"/><path d="M1 6h15.500M1 11h15.500M6.200 1v15M11.400 1v15"/></g></svg>
<svg class="a" style="left:1466px;top:1533px;" width="18" height="17" viewBox="0 0 18 17" fill="none"><g stroke="#c2c0be" stroke-width="1.400"><rect x="1" y="1" width="15.500" height="15"/><rect x="4.500" y="4.500" width="8.500" height="8.500" stroke-width="1"/><path d="M6 7h5.500M6 9h5.500M6 11h5.500" stroke-width="0.800"/></g></svg>
<svg class="a" style="left:1516px;top:1533px;" width="18" height="17" viewBox="0 0 18 17" fill="none"><g stroke="#c2c0be" stroke-width="1.400"><rect x="1" y="1" width="15.500" height="15"/><path d="M6 1v7h5.500V1"/></g></svg>
<div class="a" style="left:1557px;top:1541px;width:10px;height:1px;background:#b3b1af;"></div>
<div class="a" style="left:1573px;top:1541px;width:124px;height:1px;background:#c8c6c4;"></div>
<div class="a" style="left:1635px;top:1538px;width:1px;height:8px;background:#b3b1af;"></div>
<div class="a" style="left:1703px;top:1541px;width:11px;height:1px;background:#b3b1af;"></div>
<div class="a" style="left:1708px;top:1536px;width:1px;height:11px;background:#b3b1af;"></div>
<div class="t" style="top:1534.8px;font-size:12.6px;line-height:16px;height:16px;color:#b8b6b4;left:1730.7px;transform:scaleX(0.912);transform-origin:left center;">70%</div>
<div class="a" style="left:946px;top:1055px;width:288px;height:156px;background:#f0f0f0;border:1px solid #8c8c8c;box-shadow:0 6px 22px rgba(0,0,0,.34),0 0 8px rgba(0,0,0,.18)"></div>
<div class="a" style="left:947px;top:1056px;width:288px;height:37px;background:#fff;"></div>
<div class="t" style="top:1064.5px;font-size:15.2px;line-height:20px;height:20px;left:956.5px;transform:scaleX(0.974);transform-origin:left center;">Data Table</div>
<div class="t" style="top:1064.0px;font-size:15.5px;line-height:20px;height:20px;left:1123.2px;width:48.6px;text-align:center;">?</div>
<svg class="a" style="left:1199px;top:1068px;" width="13" height="13" viewBox="0 0 13 13" fill="none"><path d="M0.500 0.500l12 12M12.500 0.500l-12 12" stroke="#000" stroke-width="1.050"/></svg>
<div class="t" style="top:1108.3px;font-size:12.3px;line-height:16px;height:16px;left:956.5px;transform:scaleX(1.050);transform-origin:left center;">Row input cell:</div>
<div class="a" style="left:956.5px;top:1122.0px;width:8px;height:1px;background:#000;"></div>
<div class="t" style="top:1138.3px;font-size:12.3px;line-height:16px;height:16px;left:956.5px;transform:scaleX(1.054);transform-origin:left center;">Column input cell:</div>
<div class="a" style="left:956.5px;top:1152.0px;width:8px;height:1px;background:#000;"></div>
<div class="a" style="left:1073px;top:1102px;width:151px;height:24px;border:1px solid #adadad;background:#fff"></div>
<div class="a" style="left:1199px;top:1102px;width:23px;height:22px;border:2px solid #ababab;background:#e1e1e1"></div>
<div class="a" style="left:1203px;top:1107px;width:18px;height:17px;background:#fdfdfd;"></div>
<svg class="a" style="left:1205px;top:1107px;" width="13" height="15" viewBox="0 0 13 15" fill="none"><path d="M6.500 0.800L1.700 6.200h3.100v4.300h3.400v-4.300h3.100z" fill="#000"/><path d="M2 12.700h9" stroke="#000" stroke-width="1.900"/></svg>
<div class="t" style="top:1108.2px;font-size:12.3px;line-height:16px;height:16px;left:1078.0px;transform:scaleX(0.970);transform-origin:left center;">$B$27</div>
<div class="a" style="left:1073px;top:1132px;width:151px;height:24px;border:1px solid #adadad;background:#fff"></div>
<div class="a" style="left:1199px;top:1132px;width:23px;height:22px;border:2px solid #ababab;background:#e1e1e1"></div>
<div class="a" style="left:1203px;top:1137px;width:18px;height:17px;background:#fdfdfd;"></div>
<svg class="a" style="left:1205px;top:1137px;" width="13" height="15" viewBox="0 0 13 15" fill="none"><path d="M6.500 0.800L1.700 6.200h3.100v4.300h3.400v-4.300h3.100z" fill="#000"/><path d="M2 12.700h9" stroke="#000" stroke-width="1.900"/></svg>
<div class="t" style="top:1138.2px;font-size:12.3px;line-height:16px;height:16px;left:1078.0px;transform:scaleX(0.970);transform-origin:left center;">$B$26</div>
<div class="a" style="left:1113px;top:1137px;width:1px;height:16px;background:#000;"></div>
<div class="a" style="left:986px;top:1173px;width:108px;height:25px;border:2px solid #0078d7;background:#e1e1e1"></div>
<div class="t" style="top:1181.3px;font-size:12.3px;line-height:16px;height:16px;left:1013.1px;width:57.8px;text-align:center;">OK</div>
<div class="a" style="left:1113px;top:1173px;width:110px;height:27px;border:1px solid #adadad;background:#e1e1e1"></div>
<div class="t" style="top:1181.3px;font-size:12.3px;line-height:16px;height:16px;left:1129.9px;width:78.3px;text-align:center;transform:scaleX(0.992);transform-origin:center center;">Cancel</div>
</body></html>
